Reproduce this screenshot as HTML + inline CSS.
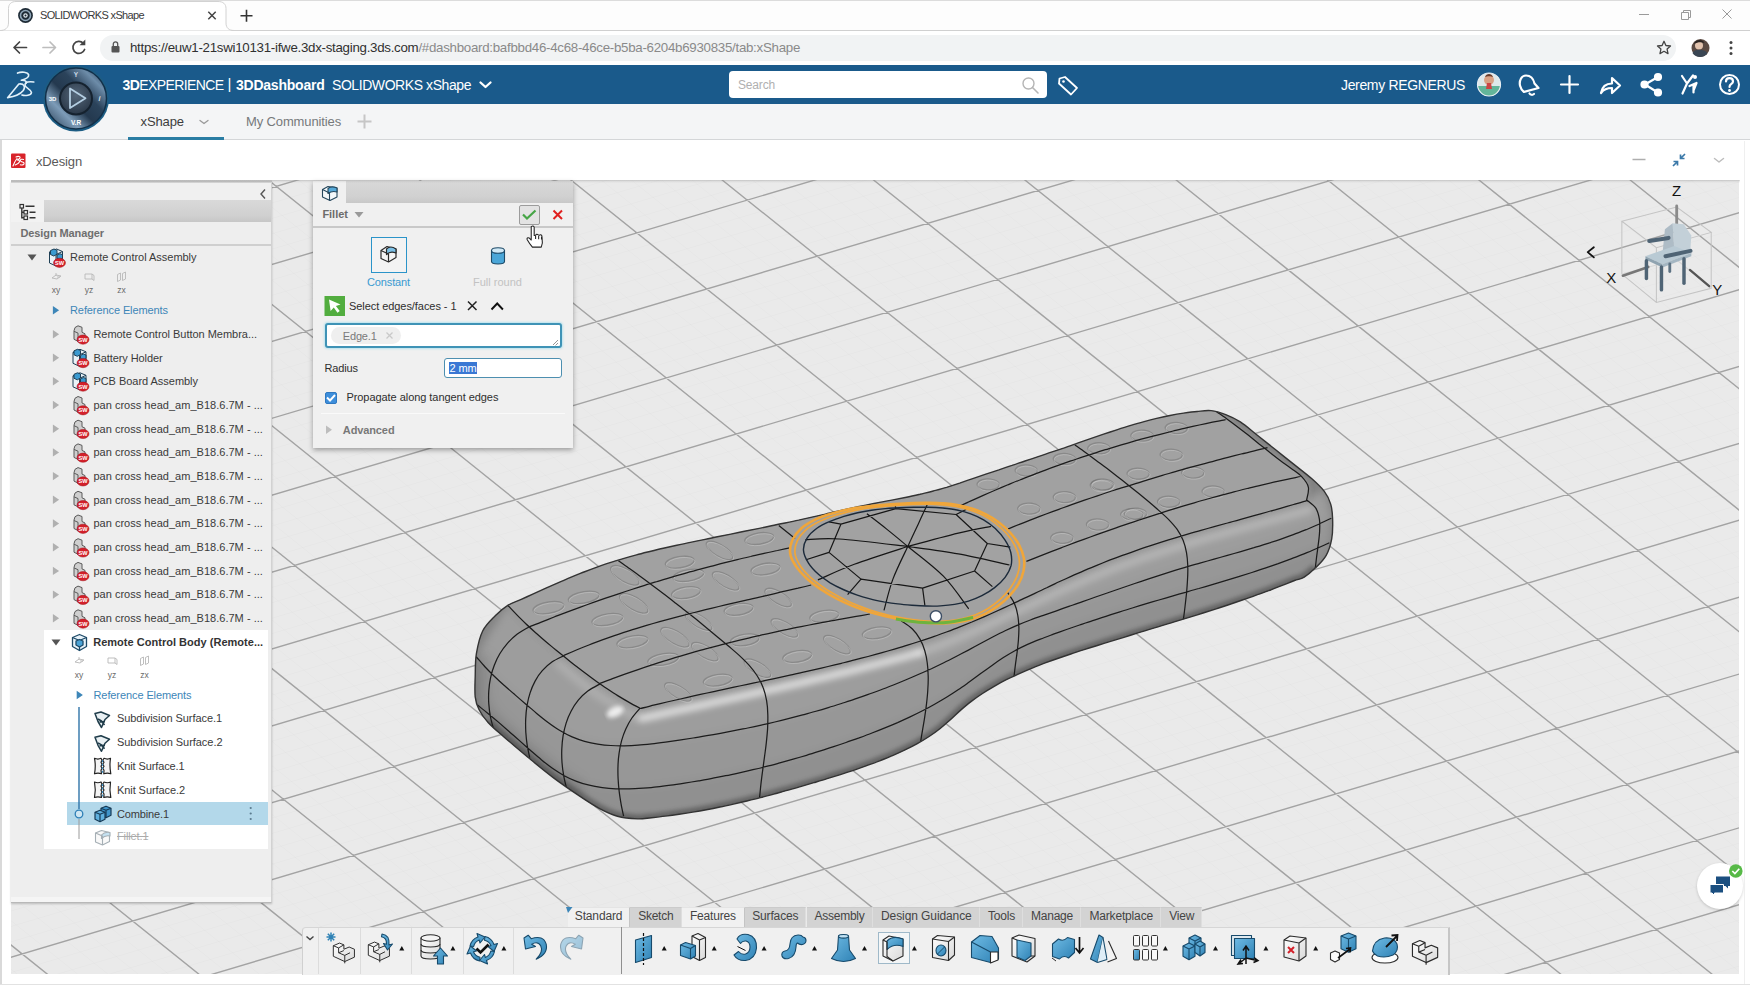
<!DOCTYPE html>
<html><head><meta charset="utf-8"><title>SOLIDWORKS xShape</title>
<style>
*{box-sizing:border-box;margin:0;padding:0}
html,body{width:1750px;height:985px;overflow:hidden;background:#fff;font-family:"Liberation Sans",sans-serif;}
.abs{position:absolute}
#root{position:absolute;left:0;top:0;width:1750px;height:985px;overflow:hidden;background:#fff}
.t{position:absolute;white-space:nowrap;line-height:1}
/* browser chrome */
#tabstrip{left:0;top:0;width:1750px;height:31px;background:#fdfdfd;border-bottom:1px solid #d0d0d0}
#tab{left:8px;top:2px;width:219px;height:29px;background:#fff;border:1px solid #cfcfcf;border-bottom:none;border-radius:8px 8px 0 0}
#addr{left:0;top:31px;width:1750px;height:34px;background:#fff}
#pill{left:100px;top:35px;width:1576px;height:26px;border-radius:13px;background:#f1f3f4}
/* header */
#hdr{left:0;top:65px;width:1750px;height:39px;background:#1a5a8b}
#search{left:729px;top:71px;width:318px;height:27px;background:#fff;border-radius:4px}
#tabsrow{left:0;top:104px;width:1750px;height:36px;background:#f4f5f6;border-bottom:1px solid #d4d6d8}
#xrow{left:0;top:140px;width:1750px;height:40px;background:#fff}
#vp{left:11px;top:180px;width:1728px;height:794px;background:#eaeaea;overflow:hidden}
</style></head><body><div id="root">
<div class="abs" id="tabstrip"></div><div class="abs" id="topline" style="left:0;top:0;width:1750px;height:1px;background:#dcdcdc"></div>
<svg class="abs" style="left:0;top:0" width="260" height="32" viewBox="0 0 260 32"><path d="M0 30.5 C5 30.5 8.5 28 8.5 23 V8.5 C8.5 4 11.5 1.5 16 1.5 H218 C223 1.5 226 4 226 8.5 V23 C226 28 229 30.5 234 30.5 H260" fill="#fff" stroke="#d2d2d2" stroke-width="1"/><rect x="0" y="31" width="260" height="1" fill="#fff"/>
<circle cx="25.5" cy="15.5" r="7.4" fill="#1d2a35"/><circle cx="25.5" cy="15.5" r="5" fill="none" stroke="#8fa6b8" stroke-width="1.6"/><circle cx="25.5" cy="15.5" r="2.2" fill="#dfe8ee"/><circle cx="25.5" cy="15.5" r="1" fill="#1d2a35"/>
<path d="M208.3 11.8l7.4 7.4M215.7 11.8l-7.4 7.4" stroke="#444" stroke-width="1.5"/><path d="M240.5 15.7h12M246.5 9.7v12" stroke="#333" stroke-width="1.6"/></svg>
<div class="t" style="letter-spacing:-0.643px;left:40px;top:10px;font-size:11px;color:#3a3a3a">SOLIDWORKS xShape</div>
<svg class="abs" style="left:1620px;top:0" width="130" height="30" viewBox="0 0 130 30"><path d="M19 14.5h10" stroke="#9a9a9a" stroke-width="1"/><path d="M61.5 12.5h7v7h-7zM63.5 12.5v-2h7v7h-2" fill="none" stroke="#9a9a9a" stroke-width="1"/><path d="M102.5 9.5l9 9M111.5 9.5l-9 9" stroke="#9a9a9a" stroke-width="1"/></svg>
<div class="abs" id="addr"></div>
<div class="abs" id="pill"></div>
<svg class="abs" style="left:0;top:32px" width="140" height="32" viewBox="0 0 140 32"><g fill="none" stroke="#444" stroke-width="1.7" stroke-linecap="round" stroke-linejoin="round"><path d="M26.5 15.5H14.5M19.5 10l-5.5 5.500 5.500 5.500"/><path d="M43 15.500h12M50 10l5.500 5.500-5.500 5.500" stroke="#bdbdbd"/><path d="M83.200 11.200a6 6 0 1 0 1.400 6.300"/></g><path d="M85.300 7.500v5.800h-5.800z" fill="#444"/><rect x="111.500" y="14" width="8" height="6.500" rx="1" fill="#555"/><path d="M113.300 14v-2a2.200 2.200 0 0 1 4.400 0v2" fill="none" stroke="#555" stroke-width="1.300"/></svg>
<div class="t" style="letter-spacing:-0.274px;left:130px;top:41px;font-size:13.3px;color:#303030">https://euw1-21swi10131-ifwe.3dx-staging.3ds.com<span style="color:#8a8a8a">/#dashboard:bafbbd46-4c68-46ce-b5ba-6204b6930835/tab:xShape</span></div>
<svg class="abs" style="left:1650px;top:32px" width="100" height="32" viewBox="0 0 100 32"><path d="M14 9.300l1.900 4.200 4.600.5-3.400 3.100.9 4.500-4-2.300-4 2.300.9-4.500-3.400-3.100 4.600-.5z" fill="none" stroke="#444" stroke-width="1.300" stroke-linejoin="round"/><circle cx="50.500" cy="16" r="9" fill="#5b4a42"/><circle cx="49" cy="13.500" r="4" fill="#e3c3ad"/><path d="M42.500 21c2-4 11-4.500 15 0a9 9 0 0 1-15 0z" fill="#3a4653"/><path d="M44 12c1-5 9-5.500 10.500-1-3-1-7-1-10.500 1z" fill="#2a2320"/><circle cx="81" cy="10.500" r="1.500" fill="#444"/><circle cx="81" cy="16" r="1.500" fill="#444"/><circle cx="81" cy="21.500" r="1.500" fill="#444"/></svg>

<div class="abs" id="hdr"></div>
<div class="abs" id="tabsrow"></div>
<div class="abs" id="xrow"></div>
<!-- 3DS logo -->
<svg class="abs" style="left:0;top:62px" width="50" height="44" viewBox="0 0 684 602"><g fill="none" stroke="#e2f1fa" stroke-width="22" stroke-linecap="round" stroke-linejoin="round"><path d="M240 152C290 130 380 135 392 175C398 215 335 238 292 250C335 246 372 262 356 292"/><path d="M104 488L258 300C330 290 352 340 318 390C280 440 190 475 104 488Z"/><path d="M462 274C400 262 342 275 342 315C342 355 428 372 430 416C430 455 345 468 300 452"/></g></svg>
<!-- compass -->
<svg class="abs" style="left:40px;top:63px" width="72" height="72" viewBox="0 0 72 72"><defs><radialGradient id="cg2" cx="0.5" cy="0.4" r="0.6"><stop offset="0" stop-color="#55677a"/><stop offset="1" stop-color="#2a3848"/></radialGradient><linearGradient id="cg3" x1="0" y1="1" x2="1" y2="0"><stop offset="0" stop-color="#1b2f45"/><stop offset="0.28" stop-color="#7d9cb8"/><stop offset="0.45" stop-color="#24394f"/><stop offset="0.62" stop-color="#2b435b"/><stop offset="0.8" stop-color="#6d8ca9"/><stop offset="1" stop-color="#1b2f45"/></linearGradient></defs>
<circle cx="36" cy="35.500" r="33" fill="#1d5d84"/><circle cx="36" cy="35.500" r="30.500" fill="url(#cg3)"/><circle cx="36" cy="35.500" r="30.500" fill="none" stroke="#123049" stroke-width="1.500"/>
<circle cx="36" cy="35.500" r="16" fill="url(#cg2)" stroke="#15222f" stroke-width="2"/>
<path d="M30 25.500v19.500l15.500-9.700z" fill="none" stroke="#b4cee2" stroke-width="1.800" stroke-linejoin="round"/>
<text x="36" y="14" font-family="Liberation Sans,sans-serif" font-size="6.500" font-weight="bold" fill="#c9d9e6" text-anchor="middle">Y</text><text x="36" y="62" font-family="Liberation Sans,sans-serif" font-size="6.500" font-weight="bold" fill="#fff" text-anchor="middle">V.R</text><text x="12.500" y="38" font-family="Liberation Sans,sans-serif" font-size="6" font-weight="bold" fill="#fff" text-anchor="middle">3D</text><text x="59.500" y="37.500" font-family="Liberation Sans,sans-serif" font-size="7" font-weight="bold" font-style="italic" fill="#dbe6ee" text-anchor="middle">i</text></svg>
<div class="t" style="letter-spacing:-0.596px;left:122.500px;top:77.500px;font-size:14px;color:#fff"><b>3D</b>EXPERIENCE</div>
<div class="t" style="left:227.500px;top:76px;font-size:15px;color:#fff">|</div>
<div class="t" style="letter-spacing:-0.230px;left:236px;top:77.500px;font-size:14px;color:#fff;font-weight:bold">3DDashboard</div>
<div class="t" style="letter-spacing:-0.428px;left:332px;top:77.500px;font-size:14px;color:#fff">SOLIDWORKS xShape</div>
<svg class="abs" style="left:478px;top:79px" width="16" height="12" viewBox="0 0 16 12"><path d="M2.500 3.500l5 4.500 5-4.500" fill="none" stroke="#fff" stroke-width="2.300" stroke-linecap="round" stroke-linejoin="round"/></svg>
<div class="abs" id="search"></div>
<div class="t" style="letter-spacing:-0.172px;left:738px;top:79px;font-size:12px;color:#b0b0b0">Search</div>
<svg class="abs" style="left:1018px;top:72px" width="70" height="26" viewBox="0 0 70 26"><circle cx="10.500" cy="11.500" r="5.500" fill="none" stroke="#b5b5b5" stroke-width="1.400"/><path d="M14.500 15.500l5.500 5.500" stroke="#b5b5b5" stroke-width="1.600" stroke-linecap="round"/><path d="M41.500 6.500l5.500-1.500 12 11-6 6.500-12-11z" fill="none" stroke="#fff" stroke-width="1.800" stroke-linejoin="round"/><circle cx="45.500" cy="9.500" r="1.300" fill="#fff"/></svg>
<div class="t" style="letter-spacing:-0.343px;left:1341px;top:77.500px;font-size:14px;color:#fff">Jeremy REGNERUS</div>
<svg class="abs" style="left:1474px;top:68px" width="276" height="34" viewBox="0 0 276 34"><defs><clipPath id="avc"><circle cx="15" cy="16.500" r="11.500"/></clipPath></defs>
<g clip-path="url(#avc)"><rect x="0" y="0" width="30" height="34" fill="#dfe8ea"/><rect x="0" y="18" width="30" height="16" fill="#63b59a"/><circle cx="15" cy="12" r="5" fill="#d9a184"/><path d="M11 9c1-4 7-4 8 0-2-1-6-1-8 0z" fill="#6a3b2a"/><path d="M13 15h4l1 6h-6z" fill="#c44"/><path d="M4 30c0-9 22-9 22 0v6H4z" fill="#63b59a"/></g><circle cx="15" cy="16.500" r="11.500" fill="none" stroke="#e8eef2" stroke-width="1.200"/>
<g fill="none" stroke="#fff" stroke-width="2.200" stroke-linecap="round" stroke-linejoin="round"><path d="M52 7.500c5 0 7.500 3.500 8.500 8l4 4.500-14.500 4c-4-3-5.500-9-3-13.500 1-1.800 2.800-3 5-3z"/><path d="M55.500 25.500c1 1.500 3 1.700 4.500.5"/><path d="M95.500 8v17M87 16.500h17"/><path d="M127 25c1-6 5-9.500 11-9.500v-5.500l8 7.500-8 7.500v-5c-5 0-8.500 1.500-11 5z"/></g>
<g fill="#fff" stroke="#fff" stroke-width="2.200"><path d="M171 16.500l12-7M171 16.500l12 7.500" fill="none"/><circle cx="170.500" cy="16.500" r="3"/><circle cx="184" cy="9" r="3"/><circle cx="184" cy="24.500" r="3"/></g>
<g fill="none" stroke="#fff" stroke-width="2.200" stroke-linecap="round" stroke-linejoin="round"><path d="M208 8l5 7.500 6-8M213 15.500l-4.500 10M215.500 18l7-3-3 7.500M219.500 17.500v7"/></g><circle cx="221" cy="9" r="2" fill="#fff"/>
<circle cx="255.500" cy="16.500" r="9.500" fill="none" stroke="#fff" stroke-width="2"/><path d="M252 13.500c0-4.500 7-4.500 7 0 0 2.500-3.500 2.500-3.500 5.500" fill="none" stroke="#fff" stroke-width="2.200" stroke-linecap="round"/><circle cx="255.500" cy="22.500" r="1.400" fill="#fff"/></svg>
<!-- tabs row -->
<div class="t" style="letter-spacing:-0.099px;left:140.500px;top:115.300px;font-size:13px;color:#3d3d3d">xShape</div>
<svg class="abs" style="left:196px;top:116px" width="16" height="12" viewBox="0 0 16 12"><path d="M4 4.500l4 3 4-3" fill="none" stroke="#9a9a9a" stroke-width="1.300" stroke-linecap="round" stroke-linejoin="round"/></svg>
<div class="abs" style="left:128px;top:137px;width:96px;height:3px;background:#2a7da3"></div>
<div class="t" style="letter-spacing:-0.128px;left:246px;top:115.300px;font-size:13px;color:#77797b">My Communities</div>
<svg class="abs" style="left:355px;top:112px" width="20" height="20" viewBox="0 0 20 20"><path d="M9.500 2.500v14M2.500 9.500h14" stroke="#c6c6c6" stroke-width="2"/></svg>
<!-- xDesign row -->
<svg class="abs" style="left:10px;top:152px" width="18" height="18" viewBox="0 0 18 18"><rect x="1" y="1.500" width="14.500" height="14.500" rx="1" fill="#d8232a"/><g fill="none" stroke="#fff" stroke-width="1.100" stroke-linecap="round"><path d="M6 5c2-1 4.500-.8 4 1-.3 1-1.700 1.600-3 2 1.500 0 2.700.4 2.500 1.600-.3 1.400-2.500 2.600-4.300 3.400"/><path d="M3 14c1-3 2.500-5.500 4-7.500"/><path d="M13.500 7.500c-1.300-.6-3-.2-3.200.8-.2 1 1 1.300 2.100 1.700 1.100.3 1.900.8 1.600 1.800-.3 1.100-2 1.500-3.700 1"/></g></svg>
<div class="t" style="letter-spacing:-0.138px;left:36px;top:154.800px;font-size:13px;color:#5a5a5a">xDesign</div>
<svg class="abs" style="left:1625px;top:148px" width="110" height="24" viewBox="0 0 110 24"><path d="M7.500 11.500h13" stroke="#aeaeae" stroke-width="1.500"/><g stroke="#3a78a8" stroke-width="1.700" fill="none"><path d="M60 6l-4.500 4.500M55.500 6.500v4h4"/><path d="M48 18l4.500-4.500M52.500 17.500v-4h-4"/></g><path d="M89.500 10.500l4.500 3.500 4.500-3.500" fill="none" stroke="#bdbdbd" stroke-width="1.500" stroke-linecap="round" stroke-linejoin="round"/></svg>

<svg class="abs" style="left:0;top:0" width="1750" height="985" viewBox="0 0 1750 985"><defs><clipPath id="vpc"><rect x="11" y="180" width="1728" height="794"/></clipPath>
<filter id="blur2" x="-10%" y="-10%" width="120%" height="120%"><feGaussianBlur stdDeviation="2.5"/></filter>
<filter id="blur25" x="-10%" y="-50%" width="120%" height="200%"><feGaussianBlur stdDeviation="2.2"/></filter>
<filter id="blur3" x="-10%" y="-50%" width="120%" height="200%"><feGaussianBlur stdDeviation="3"/></filter>
<filter id="blur4" x="-10%" y="-10%" width="120%" height="120%"><feGaussianBlur stdDeviation="4"/></filter>
<filter id="blur6" x="-10%" y="-50%" width="120%" height="200%"><feGaussianBlur stdDeviation="6"/></filter>
</defs><g clip-path="url(#vpc)"><rect x="0" y="0" width="1750" height="985" fill="#eaeaea"/><path d="M-3472.2 -144.6L2279.0 -1854.5M-4143.3 -227.0L536.6 3527.8M-3458.2 -133.4L2293.0 -1843.3M-4121.3 -233.6L558.6 3521.2M-3444.2 -122.1L2307.0 -1832.0M-4099.2 -240.1L580.7 3514.7M-3430.2 -110.9L2321.0 -1820.8M-4077.1 -246.7L602.8 3508.1M-3402.2 -88.5L2349.0 -1798.4M-4032.9 -259.8L647.0 3495.0M-3388.3 -77.3L2362.9 -1787.2M-4010.9 -266.4L669.1 3488.4M-3374.3 -66.0L2376.9 -1776.0M-3988.8 -273.0L691.1 3481.8M-3360.3 -54.8L2390.9 -1764.7M-3966.7 -279.5L713.2 3475.3M-3332.3 -32.4L2418.9 -1742.3M-3922.5 -292.6L757.4 3462.1M-3318.3 -21.2L2432.9 -1731.1M-3900.4 -299.2L779.5 3455.6M-3304.4 -9.9L2446.8 -1719.9M-3878.4 -305.8L801.6 3449.0M-3290.4 1.3L2460.8 -1708.6M-3856.3 -312.3L823.6 3442.4M-3262.4 23.7L2488.8 -1686.2M-3812.1 -325.5L867.8 3429.3M-3248.4 34.9L2502.8 -1675.0M-3790.0 -332.0L889.9 3422.8M-3234.4 46.2L2516.8 -1663.8M-3767.9 -338.6L912.0 3416.2M-3220.5 57.4L2530.7 -1652.5M-3745.9 -345.2L934.0 3409.6M-3192.5 79.8L2558.7 -1630.1M-3701.7 -358.3L978.2 3396.5M-3178.5 91.0L2572.7 -1618.9M-3679.6 -364.9L1000.3 3389.9M-3164.5 102.2L2586.7 -1607.7M-3657.5 -371.4L1022.4 3383.4M-3150.5 113.5L2600.7 -1596.4M-3635.4 -378.0L1044.5 3376.8M-3122.6 135.9L2628.6 -1574.0M-3591.3 -391.1L1088.6 3363.7M-3108.6 147.1L2642.6 -1562.8M-3569.2 -397.7L1110.7 3357.1M-3094.6 158.3L2656.6 -1551.6M-3547.1 -404.3L1132.8 3350.5M-3080.6 169.6L2670.6 -1540.3M-3525.0 -410.8L1154.9 3344.0M-3052.7 192.0L2698.5 -1517.9M-3480.9 -424.0L1199.0 3330.8M-3038.7 203.2L2712.5 -1506.7M-3458.8 -430.5L1221.1 3324.3M-3024.7 214.4L2726.5 -1495.5M-3436.7 -437.1L1243.2 3317.7M-3010.7 225.7L2740.5 -1484.3M-3414.6 -443.7L1265.3 3311.1M-2982.7 248.1L2768.5 -1461.8M-3370.4 -456.8L1309.5 3298.0M-2968.7 259.3L2782.4 -1450.6M-3348.4 -463.4L1331.5 3291.4M-2954.8 270.5L2796.4 -1439.4M-3326.3 -469.9L1353.6 3284.9M-2940.8 281.8L2810.4 -1428.2M-3304.2 -476.5L1375.7 3278.3M-2912.8 304.2L2838.4 -1405.7M-3260.0 -489.6L1419.9 3265.2M-2898.8 315.4L2852.4 -1394.5M-3237.9 -496.2L1442.0 3258.6M-2884.8 326.6L2866.3 -1383.3M-3215.9 -502.7L1464.0 3252.0M-2870.9 337.9L2880.3 -1372.1M-3193.8 -509.3L1486.1 3245.5M-2842.9 360.3L2908.3 -1349.6M-3149.6 -522.4L1530.3 3232.3M-2828.9 371.5L2922.3 -1338.4M-3127.5 -529.0L1552.4 3225.8M-2814.9 382.7L2936.3 -1327.2M-3105.4 -535.6L1574.5 3219.2M-2800.9 393.9L2950.2 -1316.0M-3083.4 -542.1L1596.5 3212.7M-2773.0 416.4L2978.2 -1293.5M-3039.2 -555.3L1640.7 3199.5M-2759.0 427.6L2992.2 -1282.3M-3017.1 -561.8L1662.8 3193.0M-2745.0 438.8L3006.2 -1271.1M-2995.0 -568.4L1684.9 3186.4M-2731.0 450.0L3020.2 -1259.9M-2973.0 -575.0L1707.0 3179.8M-2703.1 472.5L3048.1 -1237.4M-2928.8 -588.1L1751.1 3166.7M-2689.1 483.7L3062.1 -1226.2M-2906.7 -594.7L1773.2 3160.1M-2675.1 494.9L3076.1 -1215.0M-2884.6 -601.2L1795.3 3153.6M-2661.1 506.1L3090.1 -1203.8M-2862.5 -607.8L1817.4 3147.0M-2633.1 528.6L3118.0 -1181.3M-2818.4 -620.9L1861.5 3133.9M-2619.2 539.8L3132.0 -1170.1M-2796.3 -627.5L1883.6 3127.3M-2605.2 551.0L3146.0 -1158.9M-2774.2 -634.1L1905.7 3120.7M-2591.2 562.2L3160.0 -1147.7M-2752.1 -640.6L1927.8 3114.2M-2563.2 584.7L3188.0 -1125.2M-2708.0 -653.8L1972.0 3101.0M-2549.2 595.9L3201.9 -1114.0M-2685.9 -660.3L1994.0 3094.5M-2535.3 607.1L3215.9 -1102.8M-2663.8 -666.9L2016.1 3087.9M-2521.3 618.3L3229.9 -1091.6M-2641.7 -673.5L2038.2 3081.3M-2493.3 640.8L3257.9 -1069.1M-2597.5 -686.6L2082.4 3068.2M-2479.3 652.0L3271.9 -1057.9M-2575.5 -693.2L2104.4 3061.6M-2465.3 663.2L3285.8 -1046.7M-2553.4 -699.7L2126.5 3055.1M-2451.4 674.4L3299.8 -1035.5M-2531.3 -706.3L2148.6 3048.5M-2423.4 696.9L3327.8 -1013.0M-2487.1 -719.4L2192.8 3035.4M-2409.4 708.1L3341.8 -1001.8M-2465.0 -726.0L2214.9 3028.8M-2395.4 719.3L3355.8 -990.6M-2443.0 -732.5L2236.9 3022.3M-2381.4 730.5L3369.7 -979.4M-2420.9 -739.1L2259.0 3015.7M-2353.5 753.0L3397.7 -957.0M-2376.7 -752.2L2303.2 3002.6M-2339.5 764.2L3411.7 -945.7M-2354.6 -758.8L2325.3 2996.0M-2325.5 775.4L3425.7 -934.5M-2332.5 -765.4L2347.4 2989.4M-2311.5 786.6L3439.7 -923.3M-2310.5 -771.9L2369.4 2982.9M-2283.6 809.1L3467.6 -900.9M-2266.3 -785.1L2413.6 2969.7M-2269.6 820.3L3481.6 -889.6M-2244.2 -791.6L2435.7 2963.2M-2255.6 831.5L3495.6 -878.4M-2222.1 -798.2L2457.8 2956.6M-2241.6 842.7L3509.6 -867.2M-2200.0 -804.8L2479.9 2950.0M-2213.6 865.2L3537.5 -844.8M-2155.9 -817.9L2524.0 2936.9M-2199.7 876.4L3551.5 -833.5M-2133.8 -824.5L2546.1 2930.3M-2185.7 887.6L3565.5 -822.3M-2111.7 -831.0L2568.2 2923.8M-2171.7 898.8L3579.5 -811.1M-2089.6 -837.6L2590.3 2917.2M-2143.7 921.2L3607.5 -788.7M-2045.5 -850.7L2634.4 2904.1M-2129.7 932.5L3621.4 -777.4M-2023.4 -857.3L2656.5 2897.5M-2115.8 943.7L3635.4 -766.2M-2001.3 -863.9L2678.6 2890.9M-2101.8 954.9L3649.4 -755.0M-1979.2 -870.4L2700.7 2884.4M-2073.8 977.3L3677.4 -732.6M-1935.0 -883.6L2744.9 2871.2M-2059.8 988.6L3691.4 -721.3M-1913.0 -890.1L2766.9 2864.7M-2045.8 999.8L3705.3 -710.1M-1890.9 -896.7L2789.0 2858.1M-2031.9 1011.0L3719.3 -698.9M-1868.8 -903.2L2811.1 2851.5M-2003.9 1033.4L3747.3 -676.5M-1824.6 -916.4L2855.3 2838.4M-1989.9 1044.7L3761.3 -665.3M-1802.6 -922.9L2877.4 2831.8M-1975.9 1055.9L3775.3 -654.0M-1780.5 -929.5L2899.4 2825.3M-1961.9 1067.1L3789.2 -642.8M-1758.4 -936.1L2921.5 2818.7M-1934.0 1089.5L3817.2 -620.4M-1714.2 -949.2L2965.7 2805.6M-1920.0 1100.8L3831.2 -609.2M-1692.1 -955.8L2987.8 2799.0M-1906.0 1112.0L3845.2 -597.9M-1670.1 -962.3L3009.9 2792.5M-1892.0 1123.2L3859.2 -586.7M-1648.0 -968.9L3031.9 2785.9M-1864.1 1145.6L3887.1 -564.3M-1603.8 -982.0L3076.1 2772.8M-1850.1 1156.9L3901.1 -553.1M-1581.7 -988.6L3098.2 2766.2M-1836.1 1168.1L3915.1 -541.8M-1559.6 -995.2L3120.3 2759.6M-1822.1 1179.3L3929.1 -530.6M-1537.6 -1001.7L3142.3 2753.1M-1794.1 1201.7L3957.0 -508.2M-1493.4 -1014.9L3186.5 2739.9M-1780.2 1212.9L3971.0 -497.0M-1471.3 -1021.4L3208.6 2733.4M-1766.2 1224.2L3985.0 -485.7M-1449.2 -1028.0L3230.7 2726.8M-1752.2 1235.4L3999.0 -474.5M-1427.1 -1034.6L3252.8 2720.2M-1724.2 1257.8L4027.0 -452.1M-1383.0 -1047.7L3296.9 2707.1M-1710.2 1269.0L4040.9 -440.9M-1360.9 -1054.3L3319.0 2700.5M-1696.3 1280.3L4054.9 -429.6M-1338.8 -1060.8L3341.1 2694.0M-1682.3 1291.5L4068.9 -418.4M-1316.7 -1067.4L3363.2 2687.4M-1654.3 1313.9L4096.9 -396.0M-1272.6 -1080.5L3407.3 2674.3M-1640.3 1325.1L4110.9 -384.8M-1250.5 -1087.1L3429.4 2667.7M-1626.3 1336.4L4124.8 -373.6M-1228.4 -1093.7L3451.5 2661.1M-1612.4 1347.6L4138.8 -362.3M-1206.3 -1100.2L3473.6 2654.6M-1584.4 1370.0L4166.8 -339.9M-1162.1 -1113.3L3517.8 2641.4M-1570.4 1381.2L4180.8 -328.7M-1140.1 -1119.9L3539.8 2634.9M-1556.4 1392.5L4194.8 -317.5M-1118.0 -1126.5L3561.9 2628.3M-1542.4 1403.7L4208.7 -306.2M-1095.9 -1133.0L3584.0 2621.7M-1514.5 1426.1L4236.7 -283.8M-1051.7 -1146.2L3628.2 2608.6M-1500.5 1437.3L4250.7 -272.6M-1029.6 -1152.7L3650.3 2602.1M-1486.5 1448.6L4264.7 -261.4M-1007.6 -1159.3L3672.3 2595.5M-1472.5 1459.8L4278.7 -250.1M-985.5 -1165.9L3694.4 2588.9M-1444.6 1482.2L4306.6 -227.7M-941.3 -1179.0L3738.6 2575.8M-1430.6 1493.4L4320.6 -216.5M-919.2 -1185.6L3760.7 2569.2M-1416.6 1504.6L4334.6 -205.3M-897.1 -1192.1L3782.8 2562.7M-1402.6 1515.9L4348.6 -194.0M-875.1 -1198.7L3804.8 2556.1M-1374.6 1538.3L4376.5 -171.6M-830.9 -1211.8L3849.0 2543.0M-1360.7 1549.5L4390.5 -160.4M-808.8 -1218.4L3871.1 2536.4M-1346.7 1560.7L4404.5 -149.2M-786.7 -1225.0L3893.2 2529.8M-1332.7 1572.0L4418.5 -137.9M-764.7 -1231.5L3915.3 2523.3M-1304.7 1594.4L4446.5 -115.5M-720.5 -1244.7L3959.4 2510.1M-1290.7 1605.6L4460.4 -104.3M-698.4 -1251.2L3981.5 2503.6M-1276.8 1616.8L4474.4 -93.1M-676.3 -1257.8L4003.6 2497.0M-1262.8 1628.1L4488.4 -81.9M-654.2 -1264.4L4025.7 2490.4M-1234.8 1650.5L4516.4 -59.4M-610.1 -1277.5L4069.8 2477.3M-1220.8 1661.7L4530.4 -48.2M-588.0 -1284.1L4091.9 2470.7M-1206.8 1672.9L4544.3 -37.0M-565.9 -1290.6L4114.0 2464.2M-1192.9 1684.2L4558.3 -25.8M-543.8 -1297.2L4136.1 2457.6M-1164.9 1706.6L4586.3 -3.3M-499.7 -1310.3L4180.3 2444.5M-1150.9 1717.8L4600.3 7.9M-477.6 -1316.9L4202.3 2437.9M-1136.9 1729.0L4614.3 19.1M-455.5 -1323.4L4224.4 2431.3M-1122.9 1740.3L4628.3 30.3M-433.4 -1330.0L4246.5 2424.8M-1095.0 1762.7L4656.2 52.8M-389.2 -1343.1L4290.7 2411.6M-1081.0 1773.9L4670.2 64.0M-367.2 -1349.7L4312.7 2405.1M-1067.0 1785.1L4684.2 75.2M-345.1 -1356.3L4334.8 2398.5M-1053.0 1796.3L4698.2 86.4M-323.0 -1362.8L4356.9 2392.0M-1025.1 1818.8L4726.1 108.9M-278.8 -1376.0L4401.1 2378.8M-1011.1 1830.0L4740.1 120.1M-256.7 -1382.5L4423.2 2372.3M-997.1 1841.2L4754.1 131.3M-234.7 -1389.1L4445.2 2365.7M-983.1 1852.4L4768.1 142.5M-212.6 -1395.7L4467.3 2359.1M-955.1 1874.9L4796.1 165.0M-168.4 -1408.8L4511.5 2346.0M-941.2 1886.1L4810.0 176.2M-146.3 -1415.4L4533.6 2339.4M-927.2 1897.3L4824.0 187.4M-124.2 -1421.9L4555.7 2332.9M-913.2 1908.5L4838.0 198.6M-102.2 -1428.5L4577.7 2326.3M-885.2 1931.0L4866.0 221.1M-58.0 -1441.6L4621.9 2313.2M-871.2 1942.2L4880.0 232.3M-35.9 -1448.2L4644.0 2306.6M-857.3 1953.4L4893.9 243.5M-13.8 -1454.8L4666.1 2300.0M-843.3 1964.6L4907.9 254.7M8.3 -1461.3L4688.2 2293.5M-815.3 1987.1L4935.9 277.2M52.4 -1474.5L4732.3 2280.3M-801.3 1998.3L4949.9 288.4M74.5 -1481.0L4754.4 2273.8M-787.3 2009.5L4963.9 299.6M96.6 -1487.6L4776.5 2267.2M-773.4 2020.7L4977.8 310.8M118.7 -1494.2L4798.6 2260.6M-745.4 2043.2L5005.8 333.3M162.8 -1507.3L4842.7 2247.5M-731.4 2054.4L5019.8 344.5M184.9 -1513.9L4864.8 2240.9M-717.4 2065.6L5033.8 355.7M207.0 -1520.4L4886.9 2234.4M-703.4 2076.8L5047.8 366.9M229.1 -1527.0L4909.0 2227.8M-675.5 2099.3L5075.7 389.4M273.3 -1540.1L4953.2 2214.7M-661.5 2110.5L5089.7 400.6M295.3 -1546.7L4975.2 2208.1M-647.5 2121.7L5103.7 411.8M317.4 -1553.2L4997.3 2201.6M-633.5 2132.9L5117.7 423.0M339.5 -1559.8L5019.4 2195.0M-605.6 2155.4L5145.6 445.4M383.7 -1572.9L5063.6 2181.9M-591.6 2166.6L5159.6 456.7M405.7 -1579.5L5085.7 2175.3M-577.6 2177.8L5173.6 467.9M427.8 -1586.1L5107.7 2168.7M-563.6 2189.0L5187.6 479.1M449.9 -1592.6L5129.8 2162.2M-535.6 2211.5L5215.6 501.5M494.1 -1605.8L5174.0 2149.0M-521.7 2222.7L5229.5 512.8M516.2 -1612.3L5196.1 2142.5M-507.7 2233.9L5243.5 524.0M538.2 -1618.9L5218.2 2135.9M-493.7 2245.1L5257.5 535.2M560.3 -1625.5L5240.2 2129.3M-465.7 2267.6L5285.5 557.6M604.5 -1638.6L5284.4 2116.2M-451.7 2278.8L5299.5 568.9M626.6 -1645.2L5306.5 2109.6M-437.8 2290.0L5313.4 580.1M648.7 -1651.7L5328.6 2103.1M-423.8 2301.2L5327.4 591.3M670.7 -1658.3L5350.6 2096.5M-395.8 2323.6L5355.4 613.7M714.9 -1671.4L5394.8 2083.4M-381.8 2334.9L5369.4 625.0M737.0 -1678.0L5416.9 2076.8M-367.8 2346.1L5383.4 636.2M759.1 -1684.6L5439.0 2070.2M-353.9 2357.3L5397.3 647.4M781.2 -1691.1L5461.1 2063.7M-325.9 2379.7L5425.3 669.8M825.3 -1704.3L5505.2 2050.5M-311.9 2391.0L5439.3 681.1M847.4 -1710.8L5527.3 2044.0M-297.9 2402.2L5453.3 692.3M869.5 -1717.4L5549.4 2037.4M-283.9 2413.4L5467.3 703.5M891.6 -1723.9L5571.5 2030.8M-256.0 2435.8L5495.2 725.9M935.7 -1737.1L5615.6 2017.7M-242.0 2447.1L5509.2 737.1M957.8 -1743.6L5637.7 2011.1M-228.0 2458.3L5523.2 748.4M979.9 -1750.2L5659.8 2004.6M-214.0 2469.5L5537.2 759.6M1002.0 -1756.8L5681.9 1998.0M-186.1 2491.9L5565.1 782.0M1046.2 -1769.9L5726.1 1984.9M-172.1 2503.2L5579.1 793.2M1068.2 -1776.5L5748.1 1978.3M-158.1 2514.4L5593.1 804.5M1090.3 -1783.0L5770.2 1971.8M-144.1 2525.6L5607.1 815.7M1112.4 -1789.6L5792.3 1965.2M-116.1 2548.0L5635.1 838.1M1156.6 -1802.7L5836.5 1952.1M-102.2 2559.3L5649.0 849.3M1178.7 -1809.3L5858.6 1945.5M-88.2 2570.5L5663.0 860.6M1200.7 -1815.9L5880.6 1938.9M-74.2 2581.7L5677.0 871.8M1222.8 -1822.4L5902.7 1932.4M-46.2 2604.1L5705.0 894.2M1267.0 -1835.6L5946.9 1919.2M-32.2 2615.3L5719.0 905.4M1289.1 -1842.1L5969.0 1912.7M-18.3 2626.6L5732.9 916.7M1311.2 -1848.7L5991.1 1906.1M-4.3 2637.8L5746.9 927.9M1333.2 -1855.3L6013.1 1899.5M23.7 2660.2L5774.9 950.3M1377.4 -1868.4L6057.3 1886.4M37.7 2671.4L5788.9 961.5M1399.5 -1875.0L6079.4 1879.8M51.7 2682.7L5802.9 972.8M1421.6 -1881.5L6101.5 1873.3M65.6 2693.9L5816.8 984.0M1443.6 -1888.1L6123.6 1866.7M93.6 2716.3L5844.8 1006.4M1487.8 -1901.2L6167.7 1853.6M107.6 2727.5L5858.8 1017.6M1509.9 -1907.8L6189.8 1847.0M121.6 2738.8L5872.8 1028.8M1532.0 -1914.4L6211.9 1840.4M135.6 2750.0L5886.8 1040.1M1554.1 -1920.9L6234.0 1833.9M163.5 2772.4L5914.7 1062.5M1598.2 -1934.0L6278.1 1820.7M177.5 2783.6L5928.7 1073.7M1620.3 -1940.6L6300.2 1814.2M191.5 2794.9L5942.7 1084.9M1642.4 -1947.2L6322.3 1807.6M205.5 2806.1L5956.7 1096.2M1664.5 -1953.7L6344.4 1801.0M233.4 2828.5L5984.6 1118.6M1708.6 -1966.9L6388.6 1787.9M247.4 2839.7L5998.6 1129.8M1730.7 -1973.4L6410.6 1781.4M261.4 2851.0L6012.6 1141.0M1752.8 -1980.0L6432.7 1774.8M275.4 2862.2L6026.6 1152.3M1774.9 -1986.6L6454.8 1768.2M303.4 2884.6L6054.6 1174.7M1819.1 -1999.7L6499.0 1755.1M317.3 2895.8L6068.5 1185.9M1841.1 -2006.3L6521.0 1748.5M331.3 2907.0L6082.5 1197.1M1863.2 -2012.8L6543.1 1742.0M345.3 2918.3L6096.5 1208.4M1885.3 -2019.4L6565.2 1735.4M373.3 2940.7L6124.5 1230.8M1929.5 -2032.5L6609.4 1722.3M387.3 2951.9L6138.5 1242.0M1951.6 -2039.1L6631.5 1715.7M401.2 2963.1L6152.4 1253.2M1973.6 -2045.7L6653.5 1709.1M415.2 2974.4L6166.4 1264.5M1995.7 -2052.2L6675.6 1702.6M443.2 2996.8L6194.4 1286.9M2039.9 -2065.4L6719.8 1689.4M457.2 3008.0L6208.4 1298.1M2062.0 -2071.9L6741.9 1682.9M471.2 3019.2L6222.4 1309.3M2084.1 -2078.5L6764.0 1676.3M485.2 3030.5L6236.3 1320.5M2106.1 -2085.1L6786.0 1669.7M513.1 3052.9L6264.3 1343.0M2150.3 -2098.2L6830.2 1656.6M527.1 3064.1L6278.3 1354.2M2172.4 -2104.8L6852.3 1650.0M541.1 3075.3L6292.3 1365.4M2194.5 -2111.3L6874.4 1643.5M555.1 3086.6L6306.3 1376.6M2216.6 -2117.9L6896.5 1636.9M583.0 3109.0L6334.2 1399.1M2260.7 -2131.0L6940.6 1623.8M597.0 3120.2L6348.2 1410.3M2282.8 -2137.6L6962.7 1617.2M611.0 3131.4L6362.2 1421.5M2304.9 -2144.1L6984.8 1610.6M625.0 3142.7L6376.2 1432.7M2327.0 -2150.7L7006.9 1604.1M653.0 3165.1L6404.1 1455.2M2371.1 -2163.8L7051.0 1590.9M666.9 3176.3L6418.1 1466.4M2393.2 -2170.4L7073.1 1584.4M680.9 3187.5L6432.1 1477.6M2415.3 -2177.0L7095.2 1577.8M694.9 3198.7L6446.1 1488.8M2437.4 -2183.5L7117.3 1571.3" stroke="#000" stroke-opacity="0.014" stroke-width="1" fill="none"/>
<path d="M-3486.1 -155.8L2265.1 -1865.7M-4165.4 -220.4L514.5 3534.4M-3416.2 -99.7L2335.0 -1809.6M-4055.0 -253.3L624.9 3501.5M-3346.3 -43.6L2404.9 -1753.5M-3944.6 -286.1L735.3 3468.7M-3276.4 12.5L2474.8 -1697.4M-3834.2 -318.9L845.7 3435.9M-3206.5 68.6L2544.7 -1641.3M-3723.8 -351.7L956.1 3403.1M-3136.6 124.7L2614.6 -1585.2M-3613.4 -384.6L1066.5 3370.2M-3066.6 180.8L2684.6 -1529.1M-3502.9 -417.4L1177.0 3337.4M-2996.7 236.9L2754.5 -1473.0M-3392.5 -450.2L1287.4 3304.6M-2926.8 293.0L2824.4 -1416.9M-3282.1 -483.1L1397.8 3271.7M-2856.9 349.1L2894.3 -1360.8M-3171.7 -515.9L1508.2 3238.9M-2787.0 405.2L2964.2 -1304.7M-3061.3 -548.7L1618.6 3206.1M-2717.0 461.3L3034.1 -1248.7M-2950.9 -581.5L1729.0 3173.3M-2647.1 517.4L3104.1 -1192.6M-2840.5 -614.4L1839.5 3140.4M-2577.2 573.5L3174.0 -1136.5M-2730.0 -647.2L1949.9 3107.6M-2507.3 629.6L3243.9 -1080.4M-2619.6 -680.0L2060.3 3074.8M-2437.4 685.6L3313.8 -1024.3M-2509.2 -712.8L2170.7 3041.9M-2367.5 741.7L3383.7 -968.2M-2398.8 -745.7L2281.1 3009.1M-2297.5 797.8L3453.6 -912.1M-2288.4 -778.5L2391.5 2976.3M-2227.6 853.9L3523.6 -856.0M-2178.0 -811.3L2501.9 2943.5M-2157.7 910.0L3593.5 -799.9M-2067.5 -844.2L2612.4 2910.6M-2087.8 966.1L3663.4 -743.8M-1957.1 -877.0L2722.8 2877.8M-2017.9 1022.2L3733.3 -687.7M-1846.7 -909.8L2833.2 2845.0M-1948.0 1078.3L3803.2 -631.6M-1736.3 -942.6L2943.6 2812.2M-1878.0 1134.4L3873.1 -575.5M-1625.9 -975.5L3054.0 2779.3M-1808.1 1190.5L3943.1 -519.4M-1515.5 -1008.3L3164.4 2746.5M-1738.2 1246.6L4013.0 -463.3M-1405.1 -1041.1L3274.8 2713.7M-1668.3 1302.7L4082.9 -407.2M-1294.6 -1074.0L3385.3 2680.8M-1598.4 1358.8L4152.8 -351.1M-1184.2 -1106.8L3495.7 2648.0M-1528.5 1414.9L4222.7 -295.0M-1073.8 -1139.6L3606.1 2615.2M-1458.5 1471.0L4292.6 -238.9M-963.4 -1172.4L3716.5 2582.4M-1388.6 1527.1L4362.6 -182.8M-853.0 -1205.3L3826.9 2549.5M-1318.7 1583.2L4432.5 -126.7M-742.6 -1238.1L3937.3 2516.7M-1248.8 1639.3L4502.4 -70.6M-632.2 -1270.9L4047.8 2483.9M-1178.9 1695.4L4572.3 -14.5M-521.7 -1303.8L4158.2 2451.0M-1109.0 1751.5L4642.2 41.6M-411.3 -1336.6L4268.6 2418.2M-1039.0 1807.6L4712.2 97.7M-300.9 -1369.4L4379.0 2385.4M-969.1 1863.7L4782.1 153.7M-190.5 -1402.2L4489.4 2352.6M-899.2 1919.8L4852.0 209.8M-80.1 -1435.1L4599.8 2319.7M-829.3 1975.9L4921.9 265.9M30.3 -1467.9L4710.2 2286.9M-759.4 2032.0L4991.8 322.0M140.8 -1500.7L4820.7 2254.1M-689.5 2088.0L5061.7 378.1M251.2 -1533.5L4931.1 2221.2M-619.5 2144.1L5131.7 434.2M361.6 -1566.4L5041.5 2188.4M-549.6 2200.2L5201.6 490.3M472.0 -1599.2L5151.9 2155.6M-479.7 2256.3L5271.5 546.4M582.4 -1632.0L5262.3 2122.8M-409.8 2312.4L5341.4 602.5M692.8 -1664.9L5372.7 2089.9M-339.9 2368.5L5411.3 658.6M803.2 -1697.7L5483.1 2057.1M-270.0 2424.6L5481.2 714.7M913.7 -1730.5L5593.6 2024.3M-200.0 2480.7L5551.2 770.8M1024.1 -1763.3L5704.0 1991.5M-130.1 2536.8L5621.1 826.9M1134.5 -1796.2L5814.4 1958.6M-60.2 2592.9L5691.0 883.0M1244.9 -1829.0L5924.8 1925.8M9.7 2649.0L5760.9 939.1M1355.3 -1861.8L6035.2 1893.0M79.6 2705.1L5830.8 995.2M1465.7 -1894.7L6145.6 1860.1M149.5 2761.2L5900.7 1051.3M1576.1 -1927.5L6256.1 1827.3M219.5 2817.3L5970.7 1107.4M1686.6 -1960.3L6366.5 1794.5M289.4 2873.4L6040.6 1163.5M1797.0 -1993.1L6476.9 1761.7M359.3 2929.5L6110.5 1219.6M1907.4 -2026.0L6587.3 1728.8M429.2 2985.6L6180.4 1275.7M2017.8 -2058.8L6697.7 1696.0M499.1 3041.7L6250.3 1331.8M2128.2 -2091.6L6808.1 1663.2M569.1 3097.8L6320.2 1387.9M2238.6 -2124.5L6918.5 1630.3M639.0 3153.9L6390.2 1444.0M2349.1 -2157.3L7029.0 1597.5M708.9 3210.0L6460.1 1500.1M2459.5 -2190.1L7139.4 1564.7" stroke="#a3a3a3" stroke-width="1.4" fill="none"/><g id="model">
<clipPath id="silc"><path d="M508.1 605.2C512.3 602.5 516.5 601.5 520.7 599.6C524.9 597.7 529.1 595.8 533.3 593.9C537.5 592.0 541.7 590.1 545.9 588.2C550.1 586.3 554.3 584.5 558.5 582.6C562.8 580.8 567.0 578.9 571.2 577.2C575.5 575.4 579.8 573.7 584.0 572.0C588.3 570.3 592.6 568.7 597.0 567.1C601.3 565.6 605.6 564.1 610.0 562.7C614.4 561.2 618.8 559.9 623.2 558.6C627.6 557.3 632.0 556.1 636.5 554.9C640.9 553.7 645.4 552.6 649.8 551.5C654.3 550.4 658.8 549.3 663.3 548.3C667.8 547.2 672.3 546.2 676.8 545.3C681.3 544.3 685.8 543.3 690.3 542.4C694.8 541.4 699.3 540.5 703.9 539.6C708.4 538.7 712.9 537.8 717.4 536.8C721.9 535.9 726.4 535.0 730.9 534.1C735.5 533.2 740.0 532.3 744.5 531.3C749.0 530.4 753.5 529.5 758.0 528.6C762.5 527.7 767.0 526.7 771.5 525.8C776.1 524.8 780.6 523.9 785.1 523.0C789.6 522.0 794.1 521.0 798.6 520.1C803.0 519.1 807.5 518.1 812.0 517.1C816.5 516.1 821.0 515.1 825.5 514.1C830.0 513.0 834.5 512.0 838.9 511.0C843.4 509.9 847.9 508.9 852.4 507.9C856.9 507.0 861.4 506.0 865.9 505.1C870.4 504.2 875.0 503.3 879.5 502.4C884.0 501.6 888.5 500.8 893.0 499.9C897.5 499.0 902.0 498.1 906.5 497.2C911.0 496.3 915.5 495.3 920.0 494.3C924.4 493.2 928.9 492.2 933.3 491.0C937.7 489.8 942.2 488.6 946.6 487.3C950.9 485.9 955.3 484.5 959.7 483.1C964.0 481.6 968.4 480.1 972.7 478.7C977.1 477.2 981.4 475.7 985.8 474.2C990.1 472.7 994.5 471.2 998.9 469.8C1003.2 468.3 1007.6 466.8 1012.0 465.4C1016.3 463.9 1020.7 462.5 1025.0 461.0C1029.4 459.5 1033.8 458.1 1038.2 456.6C1042.5 455.1 1046.9 453.7 1051.3 452.2C1055.6 450.7 1060.0 449.2 1064.4 447.8C1068.7 446.3 1073.1 444.8 1077.5 443.2C1081.8 441.7 1086.2 440.2 1090.5 438.7C1094.9 437.2 1099.3 435.7 1103.6 434.2C1108.0 432.7 1112.4 431.3 1116.8 429.8C1121.2 428.4 1125.6 427.0 1130.0 425.7C1134.4 424.4 1138.8 423.1 1143.2 421.9C1147.6 420.7 1152.1 419.5 1156.6 418.4C1161.0 417.4 1165.5 416.4 1170.0 415.5C1174.5 414.6 1179.0 413.8 1183.6 413.1C1188.1 412.5 1192.7 411.9 1197.2 411.5C1201.8 411.0 1206.4 410.0 1211.1 410.6C1215.8 411.1 1220.8 412.7 1225.7 414.6C1230.6 416.5 1235.1 418.5 1240.3 421.9C1245.5 425.2 1250.9 430.1 1256.7 434.7C1262.5 439.3 1268.9 444.4 1275.0 449.3C1281.1 454.2 1287.2 459.0 1293.3 463.9C1299.4 468.8 1306.4 474.0 1311.6 478.6C1316.8 483.2 1321.1 487.1 1324.3 491.4C1327.5 495.6 1329.3 499.5 1330.7 504.1C1332.1 508.7 1332.4 513.0 1332.6 518.8C1332.8 524.6 1332.8 532.8 1331.7 538.9C1330.6 545.0 1329.0 550.4 1326.2 555.3C1323.5 560.2 1318.9 564.5 1315.2 568.1C1311.5 571.8 1307.6 575.1 1304.2 577.2C1300.8 579.3 1298.4 579.1 1294.6 580.5C1290.9 581.9 1286.0 584.0 1281.6 585.7C1277.3 587.4 1272.9 589.0 1268.6 590.7C1264.2 592.3 1259.9 593.9 1255.5 595.4C1251.2 597.0 1246.8 598.5 1242.4 600.0C1238.1 601.5 1233.7 603.0 1229.3 604.5C1225.0 605.9 1220.6 607.4 1216.2 608.8C1211.8 610.2 1207.4 611.6 1203.1 613.0C1198.7 614.4 1194.3 615.8 1189.9 617.2C1185.5 618.5 1181.1 619.9 1176.7 621.2C1172.3 622.6 1167.9 623.9 1163.5 625.2C1159.1 626.6 1154.7 627.9 1150.3 629.2C1145.9 630.6 1141.5 631.9 1137.1 633.2C1132.7 634.6 1128.3 635.9 1123.9 637.3C1119.5 638.6 1115.0 640.0 1110.6 641.3C1106.2 642.7 1101.8 644.1 1097.4 645.5C1093.0 646.8 1088.5 648.2 1084.1 649.7C1079.7 651.1 1075.3 652.5 1070.8 654.0C1066.4 655.5 1062.0 657.0 1057.6 658.5C1053.2 660.0 1048.8 661.6 1044.5 663.2C1040.1 664.9 1035.8 666.5 1031.5 668.3C1027.2 670.0 1023.0 671.9 1018.8 673.8C1014.6 675.7 1010.4 677.6 1006.3 679.7C1002.2 681.8 998.2 684.0 994.2 686.3C990.2 688.6 986.3 690.9 982.5 693.5C978.7 696.0 975.0 698.6 971.3 701.4C967.7 704.1 964.2 707.1 960.7 710.1C957.3 713.1 954.0 716.4 950.6 719.5C947.2 722.5 943.8 725.7 940.2 728.5C936.6 731.4 932.9 734.0 929.1 736.5C925.3 739.0 921.3 741.4 917.3 743.6C913.3 745.8 909.2 747.9 905.0 749.9C900.9 751.9 896.7 753.8 892.5 755.6C888.2 757.4 884.0 759.2 879.7 760.8C875.4 762.5 871.0 764.1 866.7 765.7C862.3 767.3 858.0 768.8 853.6 770.3C849.2 771.7 844.8 773.2 840.4 774.6C835.9 776.0 831.5 777.3 827.1 778.7C822.7 780.1 818.2 781.4 813.8 782.7C809.3 784.0 804.9 785.3 800.5 786.6C796.0 787.9 791.6 789.2 787.1 790.4C782.7 791.7 778.2 792.9 773.8 794.1C769.3 795.3 764.8 796.5 760.4 797.6C755.9 798.8 751.4 799.9 746.9 801.0C742.4 802.0 738.0 803.1 733.5 804.1C729.0 805.1 724.5 806.1 719.9 807.0C715.4 808.0 710.9 808.9 706.4 809.7C701.9 810.6 697.3 811.4 692.8 812.1C688.2 812.9 683.7 813.6 679.1 814.3C674.5 815.0 669.9 815.6 665.4 816.1C660.8 816.7 656.2 817.2 651.5 817.7C646.9 818.1 643.4 819.1 637.7 818.9C632.0 818.6 623.7 817.9 617.4 816.2C611.1 814.5 606.0 812.0 599.6 808.6C593.2 805.2 586.9 801.0 579.3 795.9C571.7 790.8 562.4 784.5 553.9 778.1C545.4 771.8 537.0 764.8 528.5 757.8C520.0 750.8 509.9 742.1 503.1 736.2C496.3 730.3 491.9 726.7 487.9 722.2C483.9 717.8 481.1 713.7 479.0 709.5C476.9 705.3 475.8 702.3 475.2 696.8C474.6 691.3 475.0 683.7 475.2 676.5C475.4 669.3 475.1 661.2 476.4 653.6C477.7 646.0 479.6 637.1 482.8 630.8C486.0 624.5 491.3 619.9 495.5 615.6C499.7 611.3 503.9 607.9 508.1 605.2Z"/></clipPath>
<path d="M508.1 605.2C512.3 602.5 516.5 601.5 520.7 599.6C524.9 597.7 529.1 595.8 533.3 593.9C537.5 592.0 541.7 590.1 545.9 588.2C550.1 586.3 554.3 584.5 558.5 582.6C562.8 580.8 567.0 578.9 571.2 577.2C575.5 575.4 579.8 573.7 584.0 572.0C588.3 570.3 592.6 568.7 597.0 567.1C601.3 565.6 605.6 564.1 610.0 562.7C614.4 561.2 618.8 559.9 623.2 558.6C627.6 557.3 632.0 556.1 636.5 554.9C640.9 553.7 645.4 552.6 649.8 551.5C654.3 550.4 658.8 549.3 663.3 548.3C667.8 547.2 672.3 546.2 676.8 545.3C681.3 544.3 685.8 543.3 690.3 542.4C694.8 541.4 699.3 540.5 703.9 539.6C708.4 538.7 712.9 537.8 717.4 536.8C721.9 535.9 726.4 535.0 730.9 534.1C735.5 533.2 740.0 532.3 744.5 531.3C749.0 530.4 753.5 529.5 758.0 528.6C762.5 527.7 767.0 526.7 771.5 525.8C776.1 524.8 780.6 523.9 785.1 523.0C789.6 522.0 794.1 521.0 798.6 520.1C803.0 519.1 807.5 518.1 812.0 517.1C816.5 516.1 821.0 515.1 825.5 514.1C830.0 513.0 834.5 512.0 838.9 511.0C843.4 509.9 847.9 508.9 852.4 507.9C856.9 507.0 861.4 506.0 865.9 505.1C870.4 504.2 875.0 503.3 879.5 502.4C884.0 501.6 888.5 500.8 893.0 499.9C897.5 499.0 902.0 498.1 906.5 497.2C911.0 496.3 915.5 495.3 920.0 494.3C924.4 493.2 928.9 492.2 933.3 491.0C937.7 489.8 942.2 488.6 946.6 487.3C950.9 485.9 955.3 484.5 959.7 483.1C964.0 481.6 968.4 480.1 972.7 478.7C977.1 477.2 981.4 475.7 985.8 474.2C990.1 472.7 994.5 471.2 998.9 469.8C1003.2 468.3 1007.6 466.8 1012.0 465.4C1016.3 463.9 1020.7 462.5 1025.0 461.0C1029.4 459.5 1033.8 458.1 1038.2 456.6C1042.5 455.1 1046.9 453.7 1051.3 452.2C1055.6 450.7 1060.0 449.2 1064.4 447.8C1068.7 446.3 1073.1 444.8 1077.5 443.2C1081.8 441.7 1086.2 440.2 1090.5 438.7C1094.9 437.2 1099.3 435.7 1103.6 434.2C1108.0 432.7 1112.4 431.3 1116.8 429.8C1121.2 428.4 1125.6 427.0 1130.0 425.7C1134.4 424.4 1138.8 423.1 1143.2 421.9C1147.6 420.7 1152.1 419.5 1156.6 418.4C1161.0 417.4 1165.5 416.4 1170.0 415.5C1174.5 414.6 1179.0 413.8 1183.6 413.1C1188.1 412.5 1192.7 411.9 1197.2 411.5C1201.8 411.0 1206.4 410.0 1211.1 410.6C1215.8 411.1 1220.8 412.7 1225.7 414.6C1230.6 416.5 1235.1 418.5 1240.3 421.9C1245.5 425.2 1250.9 430.1 1256.7 434.7C1262.5 439.3 1268.9 444.4 1275.0 449.3C1281.1 454.2 1287.2 459.0 1293.3 463.9C1299.4 468.8 1306.4 474.0 1311.6 478.6C1316.8 483.2 1321.1 487.1 1324.3 491.4C1327.5 495.6 1329.3 499.5 1330.7 504.1C1332.1 508.7 1332.4 513.0 1332.6 518.8C1332.8 524.6 1332.8 532.8 1331.7 538.9C1330.6 545.0 1329.0 550.4 1326.2 555.3C1323.5 560.2 1318.9 564.5 1315.2 568.1C1311.5 571.8 1307.6 575.1 1304.2 577.2C1300.8 579.3 1298.4 579.1 1294.6 580.5C1290.9 581.9 1286.0 584.0 1281.6 585.7C1277.3 587.4 1272.9 589.0 1268.6 590.7C1264.2 592.3 1259.9 593.9 1255.5 595.4C1251.2 597.0 1246.8 598.5 1242.4 600.0C1238.1 601.5 1233.7 603.0 1229.3 604.5C1225.0 605.9 1220.6 607.4 1216.2 608.8C1211.8 610.2 1207.4 611.6 1203.1 613.0C1198.7 614.4 1194.3 615.8 1189.9 617.2C1185.5 618.5 1181.1 619.9 1176.7 621.2C1172.3 622.6 1167.9 623.9 1163.5 625.2C1159.1 626.6 1154.7 627.9 1150.3 629.2C1145.9 630.6 1141.5 631.9 1137.1 633.2C1132.7 634.6 1128.3 635.9 1123.9 637.3C1119.5 638.6 1115.0 640.0 1110.6 641.3C1106.2 642.7 1101.8 644.1 1097.4 645.5C1093.0 646.8 1088.5 648.2 1084.1 649.7C1079.7 651.1 1075.3 652.5 1070.8 654.0C1066.4 655.5 1062.0 657.0 1057.6 658.5C1053.2 660.0 1048.8 661.6 1044.5 663.2C1040.1 664.9 1035.8 666.5 1031.5 668.3C1027.2 670.0 1023.0 671.9 1018.8 673.8C1014.6 675.7 1010.4 677.6 1006.3 679.7C1002.2 681.8 998.2 684.0 994.2 686.3C990.2 688.6 986.3 690.9 982.5 693.5C978.7 696.0 975.0 698.6 971.3 701.4C967.7 704.1 964.2 707.1 960.7 710.1C957.3 713.1 954.0 716.4 950.6 719.5C947.2 722.5 943.8 725.7 940.2 728.5C936.6 731.4 932.9 734.0 929.1 736.5C925.3 739.0 921.3 741.4 917.3 743.6C913.3 745.8 909.2 747.9 905.0 749.9C900.9 751.9 896.7 753.8 892.5 755.6C888.2 757.4 884.0 759.2 879.7 760.8C875.4 762.5 871.0 764.1 866.7 765.7C862.3 767.3 858.0 768.8 853.6 770.3C849.2 771.7 844.8 773.2 840.4 774.6C835.9 776.0 831.5 777.3 827.1 778.7C822.7 780.1 818.2 781.4 813.8 782.7C809.3 784.0 804.9 785.3 800.5 786.6C796.0 787.9 791.6 789.2 787.1 790.4C782.7 791.7 778.2 792.9 773.8 794.1C769.3 795.3 764.8 796.5 760.4 797.6C755.9 798.8 751.4 799.9 746.9 801.0C742.4 802.0 738.0 803.1 733.5 804.1C729.0 805.1 724.5 806.1 719.9 807.0C715.4 808.0 710.9 808.9 706.4 809.7C701.9 810.6 697.3 811.4 692.8 812.1C688.2 812.9 683.7 813.6 679.1 814.3C674.5 815.0 669.9 815.6 665.4 816.1C660.8 816.7 656.2 817.2 651.5 817.7C646.9 818.1 643.4 819.1 637.7 818.9C632.0 818.6 623.7 817.9 617.4 816.2C611.1 814.5 606.0 812.0 599.6 808.6C593.2 805.2 586.9 801.0 579.3 795.9C571.7 790.8 562.4 784.5 553.9 778.1C545.4 771.8 537.0 764.8 528.5 757.8C520.0 750.8 509.9 742.1 503.1 736.2C496.3 730.3 491.9 726.7 487.9 722.2C483.9 717.8 481.1 713.7 479.0 709.5C476.9 705.3 475.8 702.3 475.2 696.8C474.6 691.3 475.0 683.7 475.2 676.5C475.4 669.3 475.1 661.2 476.4 653.6C477.7 646.0 479.6 637.1 482.8 630.8C486.0 624.5 491.3 619.9 495.5 615.6C499.7 611.3 503.9 607.9 508.1 605.2Z" fill="#828282"/>
<g clip-path="url(#silc)">
<g filter="url(#blur4)">
<path d="M508.1 605.6L516.9 614.9L526.1 624.0L535.6 632.7L545.4 641.2L555.3 649.5L565.3 657.6L575.5 665.7L585.8 673.5L596.2 681.2L606.8 688.5L617.7 695.6L628.7 702.1L640.1 708.3L653.6 705.2L666.9 702.0L680.3 699.0L693.7 695.9L707.1 693.0L720.5 690.1L734.0 687.2L747.4 684.3L760.9 681.5L774.3 678.6L787.8 675.6L801.2 672.7L814.6 669.6L828.0 666.5L841.4 663.3L854.7 659.9L868.0 656.5L881.2 652.9L894.4 649.1L907.5 645.1L920.6 641.0L933.6 636.6L946.4 632.0L959.2 627.1L971.9 622.0L984.5 616.6L997.0 611.0L1009.5 605.3L1021.9 599.4L1034.3 593.6L1046.7 587.7L1059.1 581.8L1071.6 576.1L1084.1 570.6L1096.8 565.3L1109.5 560.2L1122.4 555.4L1135.3 550.8L1148.3 546.4L1161.4 542.2L1174.5 538.1L1187.7 534.2L1200.9 530.4L1214.2 526.6L1227.4 523.0L1240.7 519.3L1254.0 515.7L1267.2 512.0L1280.4 508.3L1293.6 504.5L1306.7 500.6L1324.0 491.0L1331.0 517.7L1331.3 518.2L1318.8 524.2L1306.2 529.7L1293.3 534.7L1280.3 539.3L1267.2 543.6L1254.0 547.7L1240.8 551.6L1227.4 555.4L1214.1 559.1L1200.8 562.9L1187.5 566.7L1174.2 570.7L1161.0 574.9L1147.9 579.1L1134.8 583.5L1121.7 588.0L1108.7 592.5L1095.6 597.0L1082.6 601.6L1069.6 606.2L1056.5 610.8L1043.4 615.3L1030.4 620.0L1017.6 625.1L1005.1 630.8L992.7 637.0L980.5 643.5L968.4 650.1L956.1 656.5L943.8 662.7L931.4 668.7L918.8 674.3L906.1 679.8L893.4 685.0L880.5 690.0L867.6 694.7L854.6 699.2L841.5 703.5L828.3 707.6L815.0 711.5L801.7 715.2L788.3 718.7L774.8 722.0L761.3 725.1L747.8 728.0L734.1 730.7L720.5 733.3L706.8 735.7L693.1 738.0L679.3 740.1L665.5 742.1L651.7 743.8L638.0 745.1L624.3 745.8L610.8 745.5L597.6 744.1L584.6 741.3L572.1 736.9L559.9 730.5L548.1 722.5L536.7 713.4L525.6 703.9L514.8 694.6L504.3 685.5L494.3 676.2L484.9 666.7L476.2 656.8Z" fill="#9d9d9d" stroke="#9d9d9d" stroke-width="2"/>
<path d="M476.2 656.8L484.9 666.7L494.3 676.2L504.3 685.5L514.8 694.6L525.6 703.9L536.7 713.4L548.1 722.5L559.9 730.5L572.1 736.9L584.6 741.3L597.6 744.1L610.8 745.5L624.3 745.8L638.0 745.1L651.7 743.8L665.5 742.1L679.3 740.1L693.1 738.0L706.8 735.7L720.5 733.3L734.1 730.7L747.8 728.0L761.3 725.1L774.8 722.0L788.3 718.7L801.7 715.2L815.0 711.5L828.3 707.6L841.5 703.5L854.6 699.2L867.6 694.7L880.5 690.0L893.4 685.0L906.1 679.8L918.8 674.3L931.4 668.7L943.8 662.7L956.1 656.5L968.4 650.1L980.5 643.5L992.7 637.0L1005.1 630.8L1017.6 625.1L1030.4 620.0L1043.4 615.3L1056.5 610.8L1069.6 606.2L1082.6 601.6L1095.6 597.0L1108.7 592.5L1121.7 588.0L1134.8 583.5L1147.9 579.1L1161.0 574.9L1174.2 570.7L1187.5 566.7L1200.8 562.9L1214.1 559.1L1227.4 555.4L1240.8 551.6L1254.0 547.7L1267.2 543.6L1280.3 539.3L1293.3 534.7L1306.2 529.7L1318.8 524.2L1331.3 518.2L1329.4 542.8L1316.7 548.5L1304.0 553.9L1291.1 558.9L1278.2 563.7L1265.1 568.2L1251.9 572.5L1238.7 576.7L1225.5 580.7L1212.2 584.6L1198.9 588.5L1185.5 592.3L1172.2 596.1L1158.9 600.0L1145.6 603.9L1132.3 608.0L1119.1 612.1L1105.9 616.3L1092.7 620.6L1079.6 625.0L1066.5 629.5L1053.4 634.2L1040.4 639.1L1027.6 644.4L1015.3 650.5L1003.4 657.6L992.0 665.4L980.7 673.6L969.5 681.8L958.1 689.8L946.5 697.3L934.6 704.2L922.5 710.8L910.1 716.9L897.6 722.6L884.9 727.9L872.0 733.0L859.1 737.9L846.0 742.5L832.9 746.9L819.7 751.2L806.5 755.3L793.2 759.2L779.8 762.9L766.4 766.4L752.9 769.7L739.3 772.8L725.7 775.7L712.1 778.4L698.4 780.9L684.6 783.1L670.8 785.1L656.9 786.8L643.1 788.2L629.3 788.9L615.7 788.8L602.3 787.6L589.2 785.2L576.5 781.3L564.2 775.7L552.4 768.3L541.1 759.5L530.0 750.0L519.2 740.4L508.5 731.0L498.1 721.9L487.7 713.2L477.5 705.1Z" fill="#979797" stroke="#979797" stroke-width="2"/>
<path d="M477.5 705.1L487.7 713.2L498.1 721.9L508.5 731.0L519.2 740.4L530.0 750.0L541.1 759.5L552.4 768.3L564.2 775.7L576.5 781.3L589.2 785.2L602.3 787.6L615.7 788.8L629.3 788.9L643.1 788.2L656.9 786.8L670.8 785.1L684.6 783.1L698.4 780.9L712.1 778.4L725.7 775.7L739.3 772.8L752.9 769.7L766.4 766.4L779.8 762.9L793.2 759.2L806.5 755.3L819.7 751.2L832.9 746.9L846.0 742.5L859.1 737.9L872.0 733.0L884.9 727.9L897.6 722.6L910.1 716.9L922.5 710.8L934.6 704.2L946.5 697.3L958.1 689.8L969.5 681.8L980.7 673.6L992.0 665.4L1003.4 657.6L1015.3 650.5L1027.6 644.4L1040.4 639.1L1053.4 634.2L1066.5 629.5L1079.6 625.0L1092.7 620.6L1105.9 616.3L1119.1 612.1L1132.3 608.0L1145.6 603.9L1158.9 600.0L1172.2 596.1L1185.5 592.3L1198.9 588.5L1212.2 584.6L1225.5 580.7L1238.7 576.7L1251.9 572.5L1265.1 568.2L1278.2 563.7L1291.1 558.9L1304.0 553.9L1316.7 548.5L1329.4 542.8L1326.2 555.3L1315.2 568.1L1304.2 577.2L1294.6 580.5L1281.6 585.7L1268.6 590.7L1255.5 595.4L1242.4 600.0L1229.3 604.5L1216.2 608.8L1203.1 613.0L1189.9 617.2L1176.7 621.2L1163.5 625.2L1150.3 629.2L1137.1 633.2L1123.9 637.3L1110.6 641.3L1097.4 645.5L1084.1 649.7L1070.8 654.0L1057.6 658.5L1044.5 663.2L1031.5 668.3L1018.8 673.8L1006.3 679.7L994.2 686.3L982.5 693.5L971.3 701.4L960.7 710.1L950.6 719.5L940.2 728.5L929.1 736.5L917.3 743.6L905.0 749.9L892.5 755.6L879.7 760.8L866.7 765.7L853.6 770.3L840.4 774.6L827.1 778.7L813.8 782.7L800.5 786.6L787.1 790.4L773.8 794.1L760.4 797.6L746.9 801.0L733.5 804.1L719.9 807.0L706.4 809.7L692.8 812.1L679.1 814.3L665.4 816.1L651.5 817.7L637.7 818.9L617.4 816.2L599.6 808.6L579.3 795.9L553.9 778.1L528.5 757.8L503.1 736.2L487.9 722.2L479.0 709.5Z" fill="#909090" stroke="#909090" stroke-width="2"/>
</g>
<path d="M579.3 795.9C575.1 792.9 562.4 784.5 553.9 778.1C545.4 771.8 537.0 764.8 528.5 757.8C520.0 750.8 509.9 742.1 503.1 736.2C496.3 730.3 491.9 726.7 487.9 722.2C483.9 717.8 481.1 713.7 479.0 709.5C476.9 705.3 475.8 702.3 475.2 696.8C474.6 691.3 475.0 683.7 475.2 676.5C475.4 669.3 476.2 657.4 476.4 653.6" fill="none" stroke="#000" stroke-opacity="0.10" stroke-width="26" filter="url(#blur6)"/>
<path d="M640.1 708.3L628.7 702.1L617.7 695.6L606.8 688.5L596.2 681.2L585.8 673.5L575.5 665.7L565.3 657.6L555.3 649.5L545.4 641.2L535.6 632.7L526.1 624.0L516.9 614.9L508.1 605.6L520.7 599.6L533.3 593.9L545.9 588.2L558.5 582.6L571.2 577.2L584.0 572.0L597.0 567.1L610.0 562.7L623.2 558.6L636.5 554.9L649.8 551.5L663.3 548.3L676.8 545.3L690.3 542.4L703.9 539.6L717.4 536.8L730.9 534.1L744.5 531.3L758.0 528.6L771.5 525.8L785.1 523.0L798.6 520.1L812.0 517.1L825.5 514.1L838.9 511.0L852.4 507.9L865.9 505.1L879.5 502.4L893.0 499.9L906.5 497.2L920.0 494.3L933.3 491.0L946.6 487.3L959.7 483.1L972.7 478.7L985.8 474.2L998.9 469.8L1012.0 465.4L1025.0 461.0L1038.2 456.6L1051.3 452.2L1064.4 447.8L1077.5 443.2L1090.5 438.7L1103.6 434.2L1116.8 429.8L1130.0 425.7L1143.2 421.9L1156.6 418.4L1170.0 415.5L1183.6 413.1L1197.2 411.5L1211.1 410.6L1216.5 411.9L1223.9 416.4L1234.8 424.7L1249.4 436.5L1262.2 446.6L1275.0 455.8L1289.6 467.6L1300.6 476.7L1306.1 480.4L1308.8 487.7L1307.9 495.0L1306.7 500.5L1293.6 504.5L1280.4 508.3L1267.2 512.0L1254.0 515.7L1240.7 519.3L1227.4 523.0L1214.2 526.6L1200.9 530.4L1187.7 534.2L1174.5 538.1L1161.4 542.2L1148.3 546.4L1135.3 550.8L1122.4 555.4L1109.5 560.2L1096.8 565.3L1084.1 570.6L1071.6 576.1L1059.1 581.8L1046.7 587.7L1034.3 593.6L1021.9 599.4L1009.5 605.3L997.0 611.0L984.5 616.6L971.9 622.0L959.2 627.1L946.4 632.0L933.6 636.6L920.6 641.0L907.5 645.1L894.4 649.1L881.2 652.9L868.0 656.5L854.7 659.9L841.4 663.3L828.0 666.5L814.6 669.6L801.2 672.7L787.8 675.6L774.3 678.6L760.9 681.5L747.4 684.3L734.0 687.2L720.5 690.1L707.1 693.0L693.7 695.9L680.3 699.0L666.9 702.0L653.6 705.2L640.3 708.5Z" fill="#a1a1a1" filter="url(#blur2)"/>
<path d="M640.1 708.3L628.7 702.1L617.7 695.6L606.8 688.5L596.2 681.2L585.8 673.5L575.5 665.7L565.3 657.6L555.3 649.5L545.4 641.2L535.6 632.7L526.1 624.0L516.9 614.9L508.1 605.6L520.7 599.6L533.3 593.9L545.9 588.2L558.5 582.6L571.2 577.2L584.0 572.0L597.0 567.1L610.0 562.7L623.2 558.6L636.5 554.9L649.8 551.5L663.3 548.3L676.8 545.3L690.3 542.4L703.9 539.6L717.4 536.8L730.9 534.1L744.5 531.3L758.0 528.6L771.5 525.8L785.1 523.0L798.6 520.1L812.0 517.1L825.5 514.1L838.9 511.0L852.4 507.9L865.9 505.1L879.5 502.4L893.0 499.9L906.5 497.2L920.0 494.3L933.3 491.0L946.6 487.3L959.7 483.1L972.7 478.7L985.8 474.2L998.9 469.8L1012.0 465.4L1025.0 461.0L1038.2 456.6L1051.3 452.2L1064.4 447.8L1077.5 443.2L1090.5 438.7L1103.6 434.2L1116.8 429.8L1130.0 425.7L1143.2 421.9L1156.6 418.4L1170.0 415.5L1183.6 413.1L1197.2 411.5L1211.1 410.6L1216.5 411.9L1223.9 416.4L1234.8 424.7L1249.4 436.5L1262.2 446.6L1275.0 455.8L1289.6 467.6L1300.6 476.7L1306.1 480.4L1308.8 487.7L1307.9 495.0L1306.7 500.5L1293.6 504.5L1280.4 508.3L1267.2 512.0L1254.0 515.7L1240.7 519.3L1227.4 523.0L1214.2 526.6L1200.9 530.4L1187.7 534.2L1174.5 538.1L1161.4 542.2L1148.3 546.4L1135.3 550.8L1122.4 555.4L1109.5 560.2L1096.8 565.3L1084.1 570.6L1071.6 576.1L1059.1 581.8L1046.7 587.7L1034.3 593.6L1021.9 599.4L1009.5 605.3L997.0 611.0L984.5 616.6L971.9 622.0L959.2 627.1L946.4 632.0L933.6 636.6L920.6 641.0L907.5 645.1L894.4 649.1L881.2 652.9L868.0 656.5L854.7 659.9L841.4 663.3L828.0 666.5L814.6 669.6L801.2 672.7L787.8 675.6L774.3 678.6L760.9 681.5L747.4 684.3L734.0 687.2L720.5 690.1L707.1 693.0L693.7 695.9L680.3 699.0L666.9 702.0L653.6 705.2L640.3 708.5Z" fill="#a1a1a1"/>
<path d="M642.2 718.2C644.4 717.7 651.1 716.3 655.5 715.3C659.9 714.3 664.3 713.3 668.8 712.4C673.2 711.4 677.6 710.4 682.1 709.4C686.5 708.5 690.9 707.5 695.4 706.5C699.8 705.5 704.2 704.6 708.6 703.6C713.1 702.6 717.5 701.6 721.9 700.7C726.3 699.7 730.8 698.7 735.2 697.7C739.6 696.7 744.0 695.7 748.5 694.7C752.9 693.7 757.3 692.7 761.7 691.7C766.1 690.7 770.6 689.7 775.0 688.7C779.4 687.7 783.8 686.7 788.2 685.6C792.6 684.6 797.1 683.6 801.5 682.6C805.9 681.5 810.3 680.5 814.7 679.4C819.1 678.4 823.5 677.3 827.9 676.3C832.3 675.2 836.7 674.1 841.1 673.0C845.5 672.0 849.9 670.9 854.3 669.8C858.7 668.7 863.1 667.5 867.5 666.4C871.9 665.3 876.3 664.2 880.7 663.0C885.1 661.9 889.4 660.7 893.8 659.6C898.2 658.4 902.6 657.2 907.0 656.1C911.3 654.9 917.9 653.1 920.1 652.5" fill="none" stroke="#ffffff" stroke-opacity="0.62" stroke-width="8" stroke-linecap="round" filter="url(#blur3)"/>
<path d="M920.5 652.3C922.7 651.6 929.2 649.4 933.5 647.8C937.9 646.3 942.2 644.6 946.4 642.9C950.7 641.2 954.9 639.5 959.2 637.7C963.4 635.9 967.6 634.1 971.8 632.2C976.0 630.4 980.2 628.5 984.4 626.5C988.6 624.6 992.7 622.7 996.9 620.7C1001.1 618.8 1005.2 616.8 1009.4 614.8C1013.5 612.8 1017.7 610.8 1021.8 608.9C1026.0 606.9 1030.2 604.9 1034.3 603.0C1038.5 601.0 1042.7 599.1 1046.9 597.2C1051.0 595.2 1055.2 593.3 1059.4 591.4C1063.6 589.5 1067.8 587.7 1072.0 585.8C1076.2 584.0 1080.5 582.1 1084.7 580.3C1088.9 578.5 1093.2 576.8 1097.4 575.0C1101.7 573.3 1106.0 571.6 1110.3 569.9C1114.6 568.2 1118.9 566.6 1123.2 565.0C1127.5 563.4 1131.8 561.9 1136.2 560.4C1140.5 558.8 1144.9 557.3 1149.3 555.9C1153.6 554.4 1158.0 553.0 1162.4 551.6C1166.8 550.2 1171.2 548.8 1175.6 547.4C1180.0 546.1 1184.4 544.7 1188.9 543.4C1193.3 542.1 1197.7 540.8 1202.2 539.5C1206.6 538.2 1211.0 536.9 1215.5 535.7C1219.9 534.4 1224.4 533.2 1228.8 531.9C1233.3 530.7 1237.7 529.5 1242.2 528.2C1246.6 527.0 1251.1 525.8 1255.5 524.6C1260.0 523.4 1264.4 522.1 1268.9 520.9C1273.3 519.7 1277.8 518.5 1282.2 517.2C1286.6 516.0 1291.1 514.8 1295.5 513.5C1299.9 512.3 1306.6 510.4 1308.8 509.8" fill="none" stroke="#ffffff" stroke-opacity="0.22" stroke-width="9" stroke-linecap="round" filter="url(#blur3)"/>
<path d="M560.0 664.7C565.9 669.4 582.9 684.4 595.6 693.1C608.3 701.9 629.4 713.2 636.2 717.2" fill="none" stroke="#ffffff" stroke-opacity="0.15" stroke-width="10" stroke-linecap="round" filter="url(#blur3)"/>
<ellipse cx="615" cy="712" rx="9" ry="5" fill="#fff" fill-opacity="0.8" filter="url(#blur25)" transform="rotate(-25 615 712)"/>
<path d="M1315.2 568.1C1313.4 569.6 1307.6 575.1 1304.2 577.2C1300.8 579.3 1298.4 579.1 1294.6 580.5C1290.9 581.9 1286.0 584.0 1281.6 585.7C1277.3 587.4 1272.9 589.0 1268.6 590.7C1264.2 592.3 1259.9 593.9 1255.5 595.4C1251.2 597.0 1246.8 598.5 1242.4 600.0C1238.1 601.5 1233.7 603.0 1229.3 604.5C1225.0 605.9 1220.6 607.4 1216.2 608.8C1211.8 610.2 1207.4 611.6 1203.1 613.0C1198.7 614.4 1194.3 615.8 1189.9 617.2C1185.5 618.5 1181.1 619.9 1176.7 621.2C1172.3 622.6 1167.9 623.9 1163.5 625.2C1159.1 626.6 1154.7 627.9 1150.3 629.2C1145.9 630.6 1141.5 631.9 1137.1 633.2C1132.7 634.6 1128.3 635.9 1123.9 637.3C1119.5 638.6 1115.0 640.0 1110.6 641.3C1106.2 642.7 1101.8 644.1 1097.4 645.5C1093.0 646.8 1088.5 648.2 1084.1 649.7C1079.7 651.1 1075.3 652.5 1070.8 654.0C1066.4 655.5 1062.0 657.0 1057.6 658.5C1053.2 660.0 1048.8 661.6 1044.5 663.2C1040.1 664.9 1035.8 666.5 1031.5 668.3C1027.2 670.0 1023.0 671.9 1018.8 673.8C1014.6 675.7 1010.4 677.6 1006.3 679.7C1002.2 681.8 998.2 684.0 994.2 686.3C990.2 688.6 986.3 690.9 982.5 693.5C978.7 696.0 975.0 698.6 971.3 701.4C967.7 704.1 964.2 707.1 960.7 710.1C957.3 713.1 954.0 716.4 950.6 719.5C947.2 722.5 943.8 725.7 940.2 728.5C936.6 731.4 932.9 734.0 929.1 736.5C925.3 739.0 921.3 741.4 917.3 743.6C913.3 745.8 909.2 747.9 905.0 749.9C900.9 751.9 896.7 753.8 892.5 755.6C888.2 757.4 884.0 759.2 879.7 760.8C875.4 762.5 871.0 764.1 866.7 765.7C862.3 767.3 858.0 768.8 853.6 770.3C849.2 771.7 844.8 773.2 840.4 774.6C835.9 776.0 831.5 777.3 827.1 778.7C822.7 780.1 818.2 781.4 813.8 782.7C809.3 784.0 804.9 785.3 800.5 786.6C796.0 787.9 791.6 789.2 787.1 790.4C782.7 791.7 778.2 792.9 773.8 794.1C769.3 795.3 764.8 796.5 760.4 797.6C755.9 798.8 751.4 799.9 746.9 801.0C742.4 802.0 738.0 803.1 733.5 804.1C729.0 805.1 724.5 806.1 719.9 807.0C715.4 808.0 710.9 808.9 706.4 809.7C701.9 810.6 697.3 811.4 692.8 812.1C688.2 812.9 683.7 813.6 679.1 814.3C674.5 815.0 669.9 815.6 665.4 816.1C660.8 816.7 656.2 817.2 651.5 817.7C646.9 818.1 643.4 819.1 637.7 818.9C632.0 818.6 623.7 817.9 617.4 816.2C611.1 814.5 606.0 812.0 599.6 808.6C593.2 805.2 586.9 801.0 579.3 795.9C571.7 790.8 562.4 784.5 553.9 778.1C545.4 771.8 537.0 764.8 528.5 757.8C520.0 750.8 509.9 742.1 503.1 736.2C496.3 730.3 490.4 724.5 487.9 722.2" fill="none" stroke="#000" stroke-opacity="0.28" stroke-width="9" filter="url(#blur25)"/>
<g fill="#a6a6a6" fill-opacity="0.18" stroke="#5a5a5a" stroke-opacity="0.34" stroke-width="1.3"><circle r="1" vector-effect="non-scaling-stroke" transform="matrix(5.94 4.77 9.39 -2.79 1098.9 448.3)"/><circle r="1" vector-effect="non-scaling-stroke" transform="matrix(5.94 4.77 9.39 -2.79 1142.0 435.6)"/><circle r="1" vector-effect="non-scaling-stroke" transform="matrix(5.94 4.77 9.39 -2.79 1176.3 428.0)"/><circle r="1" vector-effect="non-scaling-stroke" transform="matrix(5.94 4.77 9.39 -2.79 1171.3 454.7)"/><circle r="1" vector-effect="non-scaling-stroke" transform="matrix(5.94 4.77 9.39 -2.79 1138.2 473.7)"/><circle r="1" vector-effect="non-scaling-stroke" transform="matrix(5.94 4.77 9.39 -2.79 1192.8 472.5)"/><circle r="1" vector-effect="non-scaling-stroke" transform="matrix(5.94 4.77 9.39 -2.79 1101.4 485.1)"/><circle r="1" vector-effect="non-scaling-stroke" transform="matrix(5.94 4.77 9.39 -2.79 1168.7 501.7)"/><circle r="1" vector-effect="non-scaling-stroke" transform="matrix(5.94 4.77 9.39 -2.79 1213.2 491.5)"/><circle r="1" vector-effect="non-scaling-stroke" transform="matrix(5.94 4.77 9.39 -2.79 1131.9 514.3)"/><circle r="1" vector-effect="non-scaling-stroke" transform="matrix(5.94 4.77 9.39 -2.79 1097.6 524.5)"/><circle r="1" vector-effect="non-scaling-stroke" transform="matrix(5.94 4.77 9.39 -2.79 988.2 484.4)"/><circle r="1" vector-effect="non-scaling-stroke" transform="matrix(5.94 4.77 9.39 -2.79 1026.3 470.5)"/><circle r="1" vector-effect="non-scaling-stroke" transform="matrix(5.94 4.77 9.39 -2.79 1064.4 459.0)"/><circle r="1" vector-effect="non-scaling-stroke" transform="matrix(5.94 4.77 9.39 -2.79 1028.9 508.6)"/><circle r="1" vector-effect="non-scaling-stroke" transform="matrix(5.94 4.77 9.39 -2.79 1064.4 497.1)"/><circle r="1" vector-effect="non-scaling-stroke" transform="matrix(5.94 4.77 9.39 -2.79 1102.5 484.4)"/><circle r="1" vector-effect="non-scaling-stroke" transform="matrix(5.94 4.77 9.39 -2.79 1061.9 537.8)"/><circle r="1" vector-effect="non-scaling-stroke" transform="matrix(5.94 4.77 9.39 -2.79 1135.5 513.6)"/><circle r="1" vector-effect="non-scaling-stroke" transform="matrix(5.59 4.49 14.35 -4.27 548.4 607.7)"/><circle r="1" vector-effect="non-scaling-stroke" transform="matrix(5.59 4.49 14.35 -4.27 583.7 597.4)"/><circle r="1" vector-effect="non-scaling-stroke" transform="matrix(5.59 4.49 14.35 -4.27 607.3 619.5)"/><circle r="1" vector-effect="non-scaling-stroke" transform="matrix(5.59 4.49 14.35 -4.27 632.3 641.6)"/><circle r="1" vector-effect="non-scaling-stroke" transform="matrix(5.59 4.49 14.35 -4.27 663.2 659.3)"/><circle r="1" vector-effect="non-scaling-stroke" transform="matrix(5.59 4.49 14.35 -4.27 688.3 575.3)"/><circle r="1" vector-effect="non-scaling-stroke" transform="matrix(11.89 9.54 7.73 -2.30 633.8 603.3)"/><circle r="1" vector-effect="non-scaling-stroke" transform="matrix(11.89 9.54 7.73 -2.30 675.0 637.2)"/><circle r="1" vector-effect="non-scaling-stroke" transform="matrix(11.89 9.54 7.73 -2.30 624.9 575.3)"/><circle r="1" vector-effect="non-scaling-stroke" transform="matrix(11.19 8.98 7.18 -2.13 678.0 691.9)"/><circle r="1" vector-effect="non-scaling-stroke" transform="matrix(11.19 8.98 7.18 -2.13 704.9 651.6)"/><circle r="1" vector-effect="non-scaling-stroke" transform="matrix(5.59 4.49 13.25 -3.94 717.7 680.1)"/><circle r="1" vector-effect="non-scaling-stroke" transform="matrix(5.59 4.49 13.25 -3.94 685.9 592.6)"/><circle r="1" vector-effect="non-scaling-stroke" transform="matrix(11.19 8.98 7.18 -2.13 698.7 621.1)"/><circle r="1" vector-effect="non-scaling-stroke" transform="matrix(5.59 4.49 13.25 -3.94 744.7 639.8)"/><circle r="1" vector-effect="non-scaling-stroke" transform="matrix(11.19 8.98 7.18 -2.13 757.5 668.2)"/><circle r="1" vector-effect="non-scaling-stroke" transform="matrix(5.59 4.49 13.25 -3.94 679.7 562.2)"/><circle r="1" vector-effect="non-scaling-stroke" transform="matrix(11.19 8.98 7.18 -2.13 725.7 580.8)"/><circle r="1" vector-effect="non-scaling-stroke" transform="matrix(5.59 4.49 13.25 -3.94 738.5 609.3)"/><circle r="1" vector-effect="non-scaling-stroke" transform="matrix(11.19 8.98 7.18 -2.13 784.4 627.9)"/><circle r="1" vector-effect="non-scaling-stroke" transform="matrix(5.59 4.49 13.25 -3.94 797.2 656.4)"/><circle r="1" vector-effect="non-scaling-stroke" transform="matrix(11.19 8.98 7.18 -2.13 719.5 550.4)"/><circle r="1" vector-effect="non-scaling-stroke" transform="matrix(5.59 4.49 13.25 -3.94 765.4 569.0)"/><circle r="1" vector-effect="non-scaling-stroke" transform="matrix(11.19 8.98 7.18 -2.13 778.2 597.5)"/><circle r="1" vector-effect="non-scaling-stroke" transform="matrix(5.59 4.49 13.25 -3.94 824.2 616.1)"/><circle r="1" vector-effect="non-scaling-stroke" transform="matrix(11.19 8.98 7.18 -2.13 837.0 644.6)"/><circle r="1" vector-effect="non-scaling-stroke" transform="matrix(5.59 4.49 13.25 -3.94 759.2 538.5)"/><circle r="1" vector-effect="non-scaling-stroke" transform="matrix(5.59 4.49 13.25 -3.94 876.7 632.8)"/></g>
<g fill="none" stroke="#dcdcdc" stroke-opacity="0.35" stroke-width="1" transform="translate(0.8 1.2)"><circle r="1" vector-effect="non-scaling-stroke" transform="matrix(5.94 4.77 9.39 -2.79 1098.9 448.3)"/><circle r="1" vector-effect="non-scaling-stroke" transform="matrix(5.94 4.77 9.39 -2.79 1142.0 435.6)"/><circle r="1" vector-effect="non-scaling-stroke" transform="matrix(5.94 4.77 9.39 -2.79 1176.3 428.0)"/><circle r="1" vector-effect="non-scaling-stroke" transform="matrix(5.94 4.77 9.39 -2.79 1171.3 454.7)"/><circle r="1" vector-effect="non-scaling-stroke" transform="matrix(5.94 4.77 9.39 -2.79 1138.2 473.7)"/><circle r="1" vector-effect="non-scaling-stroke" transform="matrix(5.94 4.77 9.39 -2.79 1192.8 472.5)"/><circle r="1" vector-effect="non-scaling-stroke" transform="matrix(5.94 4.77 9.39 -2.79 1101.4 485.1)"/><circle r="1" vector-effect="non-scaling-stroke" transform="matrix(5.94 4.77 9.39 -2.79 1168.7 501.7)"/><circle r="1" vector-effect="non-scaling-stroke" transform="matrix(5.94 4.77 9.39 -2.79 1213.2 491.5)"/><circle r="1" vector-effect="non-scaling-stroke" transform="matrix(5.94 4.77 9.39 -2.79 1131.9 514.3)"/><circle r="1" vector-effect="non-scaling-stroke" transform="matrix(5.94 4.77 9.39 -2.79 1097.6 524.5)"/><circle r="1" vector-effect="non-scaling-stroke" transform="matrix(5.94 4.77 9.39 -2.79 988.2 484.4)"/><circle r="1" vector-effect="non-scaling-stroke" transform="matrix(5.94 4.77 9.39 -2.79 1026.3 470.5)"/><circle r="1" vector-effect="non-scaling-stroke" transform="matrix(5.94 4.77 9.39 -2.79 1064.4 459.0)"/><circle r="1" vector-effect="non-scaling-stroke" transform="matrix(5.94 4.77 9.39 -2.79 1028.9 508.6)"/><circle r="1" vector-effect="non-scaling-stroke" transform="matrix(5.94 4.77 9.39 -2.79 1064.4 497.1)"/><circle r="1" vector-effect="non-scaling-stroke" transform="matrix(5.94 4.77 9.39 -2.79 1102.5 484.4)"/><circle r="1" vector-effect="non-scaling-stroke" transform="matrix(5.94 4.77 9.39 -2.79 1061.9 537.8)"/><circle r="1" vector-effect="non-scaling-stroke" transform="matrix(5.94 4.77 9.39 -2.79 1135.5 513.6)"/><circle r="1" vector-effect="non-scaling-stroke" transform="matrix(5.59 4.49 14.35 -4.27 548.4 607.7)"/><circle r="1" vector-effect="non-scaling-stroke" transform="matrix(5.59 4.49 14.35 -4.27 583.7 597.4)"/><circle r="1" vector-effect="non-scaling-stroke" transform="matrix(5.59 4.49 14.35 -4.27 607.3 619.5)"/><circle r="1" vector-effect="non-scaling-stroke" transform="matrix(5.59 4.49 14.35 -4.27 632.3 641.6)"/><circle r="1" vector-effect="non-scaling-stroke" transform="matrix(5.59 4.49 14.35 -4.27 663.2 659.3)"/><circle r="1" vector-effect="non-scaling-stroke" transform="matrix(5.59 4.49 14.35 -4.27 688.3 575.3)"/><circle r="1" vector-effect="non-scaling-stroke" transform="matrix(11.89 9.54 7.73 -2.30 633.8 603.3)"/><circle r="1" vector-effect="non-scaling-stroke" transform="matrix(11.89 9.54 7.73 -2.30 675.0 637.2)"/><circle r="1" vector-effect="non-scaling-stroke" transform="matrix(11.89 9.54 7.73 -2.30 624.9 575.3)"/><circle r="1" vector-effect="non-scaling-stroke" transform="matrix(11.19 8.98 7.18 -2.13 678.0 691.9)"/><circle r="1" vector-effect="non-scaling-stroke" transform="matrix(11.19 8.98 7.18 -2.13 704.9 651.6)"/><circle r="1" vector-effect="non-scaling-stroke" transform="matrix(5.59 4.49 13.25 -3.94 717.7 680.1)"/><circle r="1" vector-effect="non-scaling-stroke" transform="matrix(5.59 4.49 13.25 -3.94 685.9 592.6)"/><circle r="1" vector-effect="non-scaling-stroke" transform="matrix(11.19 8.98 7.18 -2.13 698.7 621.1)"/><circle r="1" vector-effect="non-scaling-stroke" transform="matrix(5.59 4.49 13.25 -3.94 744.7 639.8)"/><circle r="1" vector-effect="non-scaling-stroke" transform="matrix(11.19 8.98 7.18 -2.13 757.5 668.2)"/><circle r="1" vector-effect="non-scaling-stroke" transform="matrix(5.59 4.49 13.25 -3.94 679.7 562.2)"/><circle r="1" vector-effect="non-scaling-stroke" transform="matrix(11.19 8.98 7.18 -2.13 725.7 580.8)"/><circle r="1" vector-effect="non-scaling-stroke" transform="matrix(5.59 4.49 13.25 -3.94 738.5 609.3)"/><circle r="1" vector-effect="non-scaling-stroke" transform="matrix(11.19 8.98 7.18 -2.13 784.4 627.9)"/><circle r="1" vector-effect="non-scaling-stroke" transform="matrix(5.59 4.49 13.25 -3.94 797.2 656.4)"/><circle r="1" vector-effect="non-scaling-stroke" transform="matrix(11.19 8.98 7.18 -2.13 719.5 550.4)"/><circle r="1" vector-effect="non-scaling-stroke" transform="matrix(5.59 4.49 13.25 -3.94 765.4 569.0)"/><circle r="1" vector-effect="non-scaling-stroke" transform="matrix(11.19 8.98 7.18 -2.13 778.2 597.5)"/><circle r="1" vector-effect="non-scaling-stroke" transform="matrix(5.59 4.49 13.25 -3.94 824.2 616.1)"/><circle r="1" vector-effect="non-scaling-stroke" transform="matrix(11.19 8.98 7.18 -2.13 837.0 644.6)"/><circle r="1" vector-effect="non-scaling-stroke" transform="matrix(5.59 4.49 13.25 -3.94 759.2 538.5)"/><circle r="1" vector-effect="non-scaling-stroke" transform="matrix(5.59 4.49 13.25 -3.94 876.7 632.8)"/></g>
</g>
<path d="M508.1 605.6C509.5 607.1 513.9 611.9 516.9 614.9C519.9 618.0 523.0 621.0 526.1 624.0C529.2 626.9 532.4 629.8 535.6 632.7C538.8 635.6 542.1 638.4 545.4 641.2C548.6 644.0 552.0 646.7 555.3 649.5C558.6 652.2 562.0 654.9 565.3 657.6C568.7 660.3 572.1 663.0 575.5 665.7C578.9 668.3 582.3 671.0 585.8 673.5C589.2 676.1 592.7 678.7 596.2 681.2C599.7 683.7 603.2 686.2 606.8 688.5C610.4 690.9 614.0 693.3 617.7 695.6C621.3 697.8 625.0 700.0 628.7 702.1C632.5 704.3 638.2 707.3 640.1 708.3M640.3 708.5C642.5 708.0 649.2 706.3 653.6 705.2C658.0 704.1 662.5 703.1 666.9 702.0C671.4 701.0 675.8 700.0 680.3 699.0C684.8 697.9 689.2 696.9 693.7 695.9C698.2 694.9 702.6 694.0 707.1 693.0C711.6 692.0 716.1 691.0 720.5 690.1C725.0 689.1 729.5 688.2 734.0 687.2C738.5 686.2 742.9 685.3 747.4 684.3C751.9 683.4 756.4 682.4 760.9 681.5C765.4 680.5 769.9 679.5 774.3 678.6C778.8 677.6 783.3 676.6 787.8 675.6C792.3 674.7 796.7 673.7 801.2 672.7C805.7 671.7 810.1 670.6 814.6 669.6C819.1 668.6 823.5 667.5 828.0 666.5C832.5 665.4 836.9 664.4 841.4 663.3C845.8 662.2 850.3 661.1 854.7 659.9C859.1 658.8 863.6 657.6 868.0 656.5C872.4 655.3 876.8 654.1 881.2 652.9C885.6 651.6 890.0 650.4 894.4 649.1C898.8 647.8 903.2 646.5 907.5 645.1C911.9 643.8 916.3 642.4 920.6 641.0C924.9 639.5 929.3 638.1 933.6 636.6C937.9 635.1 942.2 633.5 946.4 632.0C950.7 630.4 955.0 628.8 959.2 627.1C963.5 625.4 967.7 623.7 971.9 622.0C976.1 620.2 980.3 618.4 984.5 616.6C988.7 614.8 992.9 612.9 997.0 611.0C1001.2 609.1 1005.3 607.2 1009.5 605.3C1013.6 603.4 1017.7 601.4 1021.9 599.4C1026.0 597.5 1030.1 595.5 1034.3 593.6C1038.4 591.6 1042.5 589.6 1046.7 587.7C1050.8 585.7 1054.9 583.8 1059.1 581.8C1063.3 579.9 1067.4 578.0 1071.6 576.1C1075.8 574.3 1079.9 572.4 1084.1 570.6C1088.3 568.8 1092.5 567.0 1096.8 565.3C1101.0 563.6 1105.3 561.9 1109.5 560.2C1113.8 558.6 1118.1 557.0 1122.4 555.4C1126.7 553.8 1131.0 552.3 1135.3 550.8C1139.6 549.3 1143.9 547.8 1148.3 546.4C1152.6 545.0 1157.0 543.6 1161.4 542.2C1165.7 540.8 1170.1 539.4 1174.5 538.1C1178.9 536.8 1183.3 535.5 1187.7 534.2C1192.1 532.9 1196.5 531.6 1200.9 530.4C1205.3 529.1 1209.8 527.9 1214.2 526.6C1218.6 525.4 1223.0 524.2 1227.4 523.0C1231.9 521.7 1236.3 520.5 1240.7 519.3C1245.1 518.1 1249.5 516.9 1254.0 515.7C1258.4 514.5 1262.8 513.2 1267.2 512.0C1271.6 510.8 1276.0 509.6 1280.4 508.3C1284.8 507.0 1289.2 505.8 1293.6 504.5C1298.0 503.2 1304.5 501.3 1306.7 500.6M1216.6 411.7C1218.4 413.0 1224.0 416.8 1227.6 419.4C1231.2 422.0 1234.8 424.7 1238.3 427.4C1241.8 430.1 1245.3 432.9 1248.8 435.6C1252.2 438.4 1255.7 441.2 1259.1 444.0C1262.6 446.7 1266.0 449.5 1269.6 452.3C1273.1 455.0 1276.6 457.8 1280.2 460.5C1283.8 463.2 1287.6 465.7 1291.2 468.4C1294.7 471.1 1298.8 473.5 1301.7 476.7C1304.6 479.8 1307.6 483.3 1308.4 487.3C1309.2 491.2 1306.8 498.3 1306.5 500.6M1306.9 500.2C1308.4 501.6 1313.7 505.1 1315.8 508.2C1317.9 511.4 1318.7 515.3 1319.4 519.2C1320.0 523.0 1319.8 527.4 1319.6 531.6C1319.4 535.8 1318.8 540.1 1318.3 544.2C1317.8 548.3 1317.2 552.2 1316.7 556.2C1316.2 560.2 1315.5 566.1 1315.3 568.0M476.2 656.8C477.7 658.4 481.9 663.5 484.9 666.7C487.9 669.9 491.0 673.1 494.3 676.2C497.5 679.3 500.8 682.4 504.3 685.5C507.7 688.5 511.2 691.6 514.8 694.6C518.3 697.7 521.9 700.8 525.6 703.9C529.3 707.0 533.0 710.3 536.7 713.4C540.5 716.5 544.3 719.6 548.1 722.5C552.0 725.4 555.9 728.2 559.9 730.5C563.9 732.9 567.9 735.1 572.1 736.9C576.2 738.7 580.4 740.1 584.6 741.3C588.9 742.5 593.2 743.4 597.6 744.1C602.0 744.8 606.4 745.3 610.8 745.5C615.3 745.8 619.8 745.9 624.3 745.8C628.8 745.7 633.4 745.5 638.0 745.1C642.5 744.8 647.1 744.3 651.7 743.8C656.3 743.3 660.9 742.7 665.5 742.1C670.1 741.4 674.7 740.8 679.3 740.1C683.9 739.4 688.5 738.7 693.1 738.0C697.6 737.3 702.2 736.5 706.8 735.7C711.4 735.0 715.9 734.2 720.5 733.3C725.0 732.5 729.6 731.6 734.1 730.7C738.7 729.9 743.2 728.9 747.8 728.0C752.3 727.0 756.8 726.1 761.3 725.1C765.8 724.1 770.3 723.0 774.8 722.0C779.3 720.9 783.8 719.8 788.3 718.7C792.8 717.5 797.2 716.4 801.7 715.2C806.1 714.0 810.6 712.8 815.0 711.5C819.4 710.3 823.9 709.0 828.3 707.6C832.7 706.3 837.1 704.9 841.5 703.5C845.8 702.1 850.2 700.7 854.6 699.2C858.9 697.8 863.3 696.3 867.6 694.7C871.9 693.2 876.2 691.6 880.5 690.0C884.8 688.4 889.1 686.7 893.4 685.0C897.7 683.3 901.9 681.6 906.1 679.8C910.4 678.0 914.6 676.2 918.8 674.3C923.0 672.5 927.2 670.6 931.4 668.7C935.5 666.7 939.7 664.7 943.8 662.7C947.9 660.7 952.0 658.6 956.1 656.5C960.2 654.4 964.3 652.2 968.4 650.1C972.4 647.9 976.5 645.7 980.5 643.5C984.6 641.3 988.7 639.1 992.7 637.0C996.8 634.9 1000.9 632.8 1005.1 630.8C1009.2 628.8 1013.4 626.9 1017.6 625.1C1021.8 623.3 1026.1 621.6 1030.4 620.0C1034.7 618.3 1039.1 616.8 1043.4 615.3C1047.8 613.8 1052.2 612.3 1056.5 610.8C1060.9 609.2 1065.2 607.7 1069.6 606.2C1073.9 604.7 1078.3 603.2 1082.6 601.6C1087.0 600.1 1091.3 598.6 1095.6 597.0C1100.0 595.5 1104.3 594.0 1108.7 592.5C1113.0 591.0 1117.4 589.5 1121.7 588.0C1126.1 586.5 1130.4 585.0 1134.8 583.5C1139.2 582.0 1143.5 580.6 1147.9 579.1C1152.3 577.7 1156.7 576.3 1161.0 574.9C1165.4 573.5 1169.8 572.1 1174.2 570.7C1178.6 569.4 1183.0 568.0 1187.5 566.7C1191.9 565.4 1196.3 564.1 1200.8 562.9C1205.2 561.6 1209.7 560.4 1214.1 559.1C1218.5 557.9 1223.0 556.6 1227.4 555.4C1231.9 554.1 1236.3 552.9 1240.8 551.6C1245.2 550.3 1249.6 549.0 1254.0 547.7C1258.4 546.4 1262.8 545.0 1267.2 543.6C1271.6 542.2 1276.0 540.8 1280.3 539.3C1284.7 537.8 1289.0 536.3 1293.3 534.7C1297.6 533.1 1301.9 531.4 1306.2 529.7C1310.4 527.9 1314.6 526.1 1318.8 524.2C1323.0 522.3 1329.2 519.2 1331.3 518.2M477.5 705.1C479.2 706.5 484.3 710.4 487.7 713.2C491.1 716.0 494.6 718.9 498.1 721.9C501.5 724.9 505.0 727.9 508.5 731.0C512.1 734.1 515.6 737.2 519.2 740.4C522.8 743.6 526.4 746.8 530.0 750.0C533.7 753.2 537.3 756.4 541.1 759.5C544.8 762.5 548.6 765.6 552.4 768.3C556.3 771.0 560.2 773.5 564.2 775.7C568.2 777.9 572.3 779.7 576.5 781.3C580.6 782.9 584.9 784.2 589.2 785.2C593.5 786.3 597.9 787.0 602.3 787.6C606.7 788.2 611.2 788.6 615.7 788.8C620.2 789.0 624.7 789.0 629.3 788.9C633.9 788.8 638.5 788.5 643.1 788.2C647.7 787.8 652.3 787.4 656.9 786.8C661.5 786.3 666.2 785.7 670.8 785.1C675.4 784.5 680.0 783.8 684.6 783.1C689.2 782.4 693.8 781.6 698.4 780.9C702.9 780.1 707.5 779.3 712.1 778.4C716.6 777.5 721.2 776.7 725.7 775.7C730.3 774.8 734.8 773.8 739.3 772.8C743.9 771.8 748.4 770.8 752.9 769.7C757.4 768.7 761.9 767.6 766.4 766.4C770.9 765.3 775.3 764.1 779.8 762.9C784.3 761.7 788.7 760.5 793.2 759.2C797.6 757.9 802.1 756.6 806.5 755.3C810.9 754.0 815.3 752.6 819.7 751.2C824.1 749.8 828.5 748.4 832.9 746.9C837.3 745.5 841.7 744.0 846.0 742.5C850.4 741.0 854.7 739.4 859.1 737.9C863.4 736.3 867.7 734.7 872.0 733.0C876.3 731.4 880.6 729.7 884.9 727.9C889.1 726.2 893.4 724.4 897.6 722.6C901.8 720.7 906.0 718.8 910.1 716.9C914.3 714.9 918.4 712.9 922.5 710.8C926.5 708.7 930.6 706.5 934.6 704.2C938.6 702.0 942.6 699.7 946.5 697.3C950.4 694.9 954.3 692.4 958.1 689.8C962.0 687.2 965.7 684.5 969.5 681.8C973.3 679.1 977.0 676.3 980.7 673.6C984.5 670.8 988.2 668.1 992.0 665.4C995.8 662.7 999.6 660.1 1003.4 657.6C1007.3 655.1 1011.3 652.7 1015.3 650.5C1019.3 648.3 1023.5 646.3 1027.6 644.4C1031.8 642.5 1036.1 640.8 1040.4 639.1C1044.7 637.4 1049.1 635.8 1053.4 634.2C1057.8 632.6 1062.1 631.1 1066.5 629.5C1070.8 628.0 1075.2 626.5 1079.6 625.0C1084.0 623.5 1088.3 622.0 1092.7 620.6C1097.1 619.1 1101.5 617.7 1105.9 616.3C1110.3 614.8 1114.7 613.4 1119.1 612.1C1123.5 610.7 1127.9 609.3 1132.3 608.0C1136.7 606.6 1141.2 605.3 1145.6 603.9C1150.0 602.6 1154.5 601.3 1158.9 600.0C1163.3 598.7 1167.8 597.4 1172.2 596.1C1176.6 594.8 1181.1 593.6 1185.5 592.3C1190.0 591.0 1194.4 589.7 1198.9 588.5C1203.3 587.2 1207.8 585.9 1212.2 584.6C1216.6 583.3 1221.1 582.0 1225.5 580.7C1229.9 579.4 1234.3 578.0 1238.7 576.7C1243.2 575.3 1247.6 573.9 1251.9 572.5C1256.3 571.1 1260.7 569.7 1265.1 568.2C1269.5 566.7 1273.8 565.2 1278.2 563.7C1282.5 562.1 1286.8 560.5 1291.1 558.9C1295.4 557.3 1299.7 555.6 1304.0 553.9C1308.3 552.1 1312.5 550.4 1316.7 548.5C1321.0 546.7 1327.3 543.8 1329.4 542.8M528.8 627.0C526.8 628.3 520.6 631.6 517.0 634.3C513.5 637.0 510.3 640.1 507.4 643.3C504.5 646.6 502.0 650.1 499.8 653.8C497.6 657.4 495.8 661.3 494.3 665.3C492.7 669.3 491.5 673.5 490.6 677.7C489.7 681.9 489.1 686.3 488.8 690.7C488.5 695.0 488.5 699.5 488.8 703.9C489.1 708.2 489.6 712.7 490.5 717.0C491.3 721.3 493.2 727.7 493.8 729.8M564.0 655.6C562.0 656.7 555.5 659.5 551.9 662.0C548.2 664.5 545.1 667.5 542.3 670.7C539.5 673.8 537.1 677.4 535.1 681.1C533.1 684.8 531.4 688.8 530.1 692.9C528.7 697.0 527.8 701.3 527.0 705.6C526.3 710.0 525.9 714.5 525.7 718.9C525.5 723.3 525.6 727.9 525.8 732.3C526.1 736.7 526.6 741.1 527.2 745.3C527.9 749.5 529.3 755.6 529.7 757.6M599.7 684.1C597.7 685.2 591.3 688.4 587.8 691.1C584.2 693.8 581.1 696.9 578.3 700.2C575.6 703.5 573.2 707.2 571.2 711.0C569.2 714.7 567.5 718.8 566.2 722.9C564.9 727.0 563.9 731.4 563.1 735.7C562.4 740.1 562.0 744.6 561.8 749.0C561.6 753.5 561.7 758.0 562.0 762.5C562.3 766.9 562.9 771.3 563.7 775.6C564.4 779.9 566.0 786.0 566.5 788.1M640.1 708.1C638.7 709.8 634.3 714.5 631.9 718.0C629.5 721.5 627.5 725.2 625.8 729.0C624.1 732.7 622.7 736.7 621.6 740.7C620.5 744.7 619.7 748.9 619.1 753.1C618.5 757.3 618.1 761.6 618.0 765.8C617.8 770.1 617.9 774.4 618.1 778.7C618.3 783.0 618.7 787.3 619.2 791.6C619.7 795.8 620.4 800.0 621.1 804.1C621.8 808.2 623.2 814.1 623.6 816.1M618.4 560.7C620.3 562.1 626.1 566.1 629.8 568.8C633.6 571.5 637.4 574.2 641.1 577.0C644.8 579.7 648.5 582.4 652.2 585.2C655.9 588.0 659.6 590.7 663.2 593.5C666.9 596.3 670.5 599.1 674.1 601.9C677.8 604.8 681.4 607.6 685.0 610.5C688.6 613.3 692.2 616.2 695.9 619.1C699.5 622.0 703.1 625.0 706.7 627.9C710.3 630.9 713.9 633.9 717.5 636.9C721.2 639.9 724.8 642.9 728.4 646.0C732.0 649.1 735.7 652.1 739.2 655.4C742.6 658.6 746.0 661.8 749.0 665.2C752.1 668.7 754.9 672.2 757.3 676.0C759.7 679.7 761.7 683.6 763.2 687.8C764.8 691.9 765.8 696.2 766.6 700.7C767.4 705.1 767.7 709.8 767.8 714.4C768.0 719.1 767.8 723.8 767.6 728.6C767.3 733.3 766.8 738.1 766.3 742.9C765.8 747.6 765.1 752.3 764.5 756.9C763.9 761.6 763.2 766.2 762.6 770.8C762.0 775.4 761.4 779.9 760.9 784.4C760.4 788.9 759.8 795.6 759.5 797.9M901.3 620.9C903.1 622.2 909.3 626.0 912.4 629.0C915.5 632.0 917.9 635.5 920.0 639.1C922.1 642.7 923.6 646.6 924.8 650.7C926.0 654.7 926.8 659.0 927.3 663.3C927.9 667.5 928.1 672.0 928.2 676.4C928.3 680.8 928.1 685.3 927.8 689.7C927.6 694.2 927.1 698.7 926.6 703.1C926.1 707.5 925.5 712.0 924.8 716.3C924.2 720.7 923.4 725.0 922.7 729.2C922.0 733.3 921.0 739.4 920.7 741.5M1007.7 592.7C1008.8 594.5 1012.6 599.6 1014.3 603.3C1016.0 607.0 1017.0 611.0 1017.7 615.0C1018.5 619.0 1018.7 623.2 1018.9 627.4C1019.0 631.6 1018.7 636.0 1018.4 640.2C1018.1 644.5 1017.5 648.8 1017.0 653.1C1016.5 657.3 1015.8 661.6 1015.3 665.7C1014.8 669.8 1014.1 675.7 1013.9 677.7M1074.8 444.9C1076.6 446.2 1082.0 450.0 1085.5 452.6C1089.1 455.2 1092.6 457.8 1096.2 460.4C1099.7 463.0 1103.2 465.7 1106.8 468.3C1110.3 471.0 1113.8 473.7 1117.3 476.4C1120.8 479.2 1124.3 481.9 1127.8 484.7C1131.2 487.4 1134.7 490.2 1138.2 493.1C1141.6 495.9 1145.0 498.7 1148.5 501.6C1151.9 504.5 1155.3 507.4 1158.7 510.4C1162.0 513.3 1165.4 516.3 1168.5 519.4C1171.5 522.6 1174.5 525.8 1177.0 529.2C1179.4 532.7 1181.5 536.4 1183.1 540.3C1184.7 544.2 1185.7 548.4 1186.5 552.7C1187.3 557.0 1187.6 561.6 1187.8 566.1C1187.9 570.6 1187.8 575.2 1187.5 579.8C1187.3 584.4 1186.9 589.0 1186.5 593.5C1186.0 597.9 1185.5 602.4 1185.0 606.7C1184.5 611.1 1183.7 617.3 1183.4 619.4M528.6 627.2C530.7 626.3 537.1 623.8 541.3 622.1C545.6 620.4 549.8 618.7 554.1 617.0C558.3 615.4 562.6 613.7 566.9 612.1C571.2 610.5 575.5 608.9 579.8 607.3C584.1 605.8 588.4 604.2 592.7 602.7C597.0 601.2 601.3 599.7 605.6 598.2C609.9 596.7 614.3 595.2 618.6 593.8C623.0 592.3 627.3 590.9 631.7 589.5C636.0 588.1 640.4 586.7 644.7 585.3C649.1 583.9 653.5 582.6 657.8 581.3C662.2 579.9 666.6 578.6 671.0 577.3C675.4 576.1 679.8 574.8 684.2 573.6C688.6 572.3 693.0 571.1 697.4 569.9C701.8 568.7 706.3 567.5 710.7 566.3C715.1 565.2 719.5 564.0 724.0 562.9C728.4 561.8 732.8 560.7 737.3 559.6C741.7 558.5 746.2 557.5 750.7 556.5C755.1 555.4 759.6 554.4 764.0 553.4C768.5 552.4 773.0 551.4 777.5 550.5C781.9 549.5 788.7 548.1 790.9 547.7M563.9 655.4C566.0 654.5 572.2 651.8 576.4 650.0C580.5 648.3 584.7 646.6 588.9 645.0C593.1 643.3 597.4 641.8 601.6 640.2C605.8 638.7 610.1 637.2 614.4 635.7C618.6 634.2 622.9 632.8 627.2 631.4C631.5 630.0 635.8 628.7 640.1 627.4C644.4 626.1 648.8 624.8 653.1 623.5C657.5 622.3 661.8 621.1 666.2 619.9C670.5 618.7 674.9 617.5 679.3 616.3C683.6 615.2 688.0 614.1 692.4 613.0C696.8 611.9 701.2 610.8 705.6 609.7C710.0 608.6 714.4 607.6 718.8 606.5C723.2 605.5 727.6 604.4 732.0 603.4C736.4 602.4 740.8 601.4 745.2 600.4C749.6 599.3 754.1 598.3 758.5 597.3C762.9 596.3 767.3 595.3 771.7 594.3C776.1 593.3 780.5 592.3 784.9 591.2C789.3 590.2 793.7 589.2 798.1 588.2C802.4 587.1 809.0 585.5 811.2 585.0M599.5 683.7C601.6 682.9 608.2 680.3 612.5 678.7C616.9 677.1 621.3 675.5 625.6 673.9C630.0 672.4 634.4 670.8 638.8 669.3C643.2 667.8 647.7 666.3 652.1 664.9C656.5 663.5 661.0 662.0 665.4 660.7C669.9 659.3 674.3 657.9 678.8 656.6C683.3 655.3 687.8 654.0 692.2 652.7C696.7 651.4 701.2 650.1 705.7 648.9C710.2 647.7 714.7 646.5 719.3 645.3C723.8 644.1 728.3 643.0 732.8 641.9C737.4 640.7 741.9 639.6 746.4 638.6C751.0 637.5 755.5 636.4 760.1 635.4C764.6 634.3 769.2 633.3 773.8 632.3C778.3 631.3 782.9 630.3 787.5 629.4C792.0 628.4 796.6 627.5 801.2 626.6C805.8 625.7 810.3 624.8 814.9 623.9C819.5 623.0 824.1 622.1 828.7 621.3C833.2 620.4 837.8 619.6 842.4 618.8C847.0 618.0 851.6 617.2 856.2 616.4C860.8 615.6 867.6 614.4 869.9 614.0M958.3 506.7C960.3 505.8 966.4 502.9 970.4 501.1C974.5 499.2 978.6 497.4 982.7 495.6C986.8 493.8 990.9 492.0 995.0 490.2C999.1 488.5 1003.2 486.7 1007.3 485.0C1011.5 483.3 1015.6 481.6 1019.8 480.0C1023.9 478.3 1028.1 476.7 1032.3 475.1C1036.5 473.4 1040.6 471.9 1044.8 470.3C1049.0 468.7 1053.2 467.2 1057.5 465.7C1061.7 464.2 1065.9 462.7 1070.1 461.2C1074.4 459.8 1078.6 458.3 1082.8 456.9C1087.1 455.5 1091.4 454.1 1095.6 452.8C1099.9 451.4 1104.2 450.1 1108.4 448.8C1112.7 447.5 1117.0 446.2 1121.3 444.9C1125.6 443.7 1129.9 442.4 1134.2 441.2C1138.5 440.0 1142.9 438.8 1147.2 437.7C1151.5 436.5 1155.8 435.4 1160.2 434.3C1164.5 433.2 1168.8 432.1 1173.2 431.0C1177.5 430.0 1181.9 429.0 1186.3 427.9C1190.6 426.9 1195.0 426.0 1199.3 425.0C1203.7 424.1 1208.1 423.1 1212.5 422.2C1216.8 421.3 1223.4 420.1 1225.6 419.6M1008.1 528.8C1010.2 528.0 1016.5 525.4 1020.7 523.8C1024.9 522.1 1029.2 520.5 1033.4 518.8C1037.6 517.2 1041.9 515.6 1046.1 514.0C1050.4 512.4 1054.6 510.9 1058.9 509.3C1063.1 507.8 1067.4 506.2 1071.7 504.7C1076.0 503.2 1080.2 501.7 1084.5 500.2C1088.8 498.7 1093.1 497.3 1097.4 495.8C1101.7 494.4 1106.0 493.0 1110.3 491.5C1114.7 490.1 1119.0 488.7 1123.3 487.4C1127.6 486.0 1132.0 484.6 1136.3 483.3C1140.6 481.9 1145.0 480.6 1149.3 479.3C1153.7 478.0 1158.0 476.7 1162.4 475.4C1166.7 474.1 1171.1 472.9 1175.4 471.6C1179.8 470.4 1184.2 469.1 1188.5 467.9C1192.9 466.7 1197.3 465.5 1201.7 464.3C1206.0 463.1 1210.4 462.0 1214.8 460.8C1219.2 459.6 1223.6 458.5 1228.0 457.4C1232.4 456.3 1236.7 455.1 1241.1 454.0C1245.5 453.0 1249.9 451.9 1254.3 450.8C1258.7 449.7 1265.3 448.2 1267.5 447.6M1026.4 561.3C1028.5 560.5 1034.9 558.0 1039.1 556.3C1043.3 554.7 1047.6 553.0 1051.8 551.4C1056.1 549.7 1060.4 548.1 1064.6 546.5C1068.9 544.9 1073.2 543.3 1077.4 541.7C1081.7 540.1 1086.0 538.6 1090.3 537.0C1094.6 535.5 1098.9 533.9 1103.2 532.4C1107.5 530.9 1111.8 529.3 1116.1 527.8C1120.4 526.3 1124.7 524.9 1129.1 523.4C1133.4 521.9 1137.7 520.5 1142.0 519.1C1146.4 517.6 1150.7 516.2 1155.1 514.8C1159.4 513.4 1163.8 512.0 1168.1 510.7C1172.5 509.3 1176.8 508.0 1181.2 506.7C1185.6 505.3 1189.9 504.0 1194.3 502.8C1198.7 501.5 1203.1 500.2 1207.5 499.0C1211.9 497.8 1216.3 496.6 1220.7 495.4C1225.1 494.2 1229.5 493.0 1233.9 491.9C1238.3 490.7 1242.7 489.6 1247.1 488.5C1251.6 487.4 1256.0 486.3 1260.4 485.3C1264.9 484.2 1269.3 483.2 1273.8 482.2C1278.2 481.2 1282.7 480.2 1287.1 479.3C1291.6 478.3 1298.3 477.0 1300.5 476.5M778.8 525.4L795.0 538.6" fill="none" stroke="#1c1c1c" stroke-width="1.25" stroke-linejoin="round" clip-path="url(#silc)"/>
<path d="M508.1 605.2C512.3 602.5 516.5 601.5 520.7 599.6C524.9 597.7 529.1 595.8 533.3 593.9C537.5 592.0 541.7 590.1 545.9 588.2C550.1 586.3 554.3 584.5 558.5 582.6C562.8 580.8 567.0 578.9 571.2 577.2C575.5 575.4 579.8 573.7 584.0 572.0C588.3 570.3 592.6 568.7 597.0 567.1C601.3 565.6 605.6 564.1 610.0 562.7C614.4 561.2 618.8 559.9 623.2 558.6C627.6 557.3 632.0 556.1 636.5 554.9C640.9 553.7 645.4 552.6 649.8 551.5C654.3 550.4 658.8 549.3 663.3 548.3C667.8 547.2 672.3 546.2 676.8 545.3C681.3 544.3 685.8 543.3 690.3 542.4C694.8 541.4 699.3 540.5 703.9 539.6C708.4 538.7 712.9 537.8 717.4 536.8C721.9 535.9 726.4 535.0 730.9 534.1C735.5 533.2 740.0 532.3 744.5 531.3C749.0 530.4 753.5 529.5 758.0 528.6C762.5 527.7 767.0 526.7 771.5 525.8C776.1 524.8 780.6 523.9 785.1 523.0C789.6 522.0 794.1 521.0 798.6 520.1C803.0 519.1 807.5 518.1 812.0 517.1C816.5 516.1 821.0 515.1 825.5 514.1C830.0 513.0 834.5 512.0 838.9 511.0C843.4 509.9 847.9 508.9 852.4 507.9C856.9 507.0 861.4 506.0 865.9 505.1C870.4 504.2 875.0 503.3 879.5 502.4C884.0 501.6 888.5 500.8 893.0 499.9C897.5 499.0 902.0 498.1 906.5 497.2C911.0 496.3 915.5 495.3 920.0 494.3C924.4 493.2 928.9 492.2 933.3 491.0C937.7 489.8 942.2 488.6 946.6 487.3C950.9 485.9 955.3 484.5 959.7 483.1C964.0 481.6 968.4 480.1 972.7 478.7C977.1 477.2 981.4 475.7 985.8 474.2C990.1 472.7 994.5 471.2 998.9 469.8C1003.2 468.3 1007.6 466.8 1012.0 465.4C1016.3 463.9 1020.7 462.5 1025.0 461.0C1029.4 459.5 1033.8 458.1 1038.2 456.6C1042.5 455.1 1046.9 453.7 1051.3 452.2C1055.6 450.7 1060.0 449.2 1064.4 447.8C1068.7 446.3 1073.1 444.8 1077.5 443.2C1081.8 441.7 1086.2 440.2 1090.5 438.7C1094.9 437.2 1099.3 435.7 1103.6 434.2C1108.0 432.7 1112.4 431.3 1116.8 429.8C1121.2 428.4 1125.6 427.0 1130.0 425.7C1134.4 424.4 1138.8 423.1 1143.2 421.9C1147.6 420.7 1152.1 419.5 1156.6 418.4C1161.0 417.4 1165.5 416.4 1170.0 415.5C1174.5 414.6 1179.0 413.8 1183.6 413.1C1188.1 412.5 1192.7 411.9 1197.2 411.5C1201.8 411.0 1206.4 410.0 1211.1 410.6C1215.8 411.1 1220.8 412.7 1225.7 414.6C1230.6 416.5 1235.1 418.5 1240.3 421.9C1245.5 425.2 1250.9 430.1 1256.7 434.7C1262.5 439.3 1268.9 444.4 1275.0 449.3C1281.1 454.2 1287.2 459.0 1293.3 463.9C1299.4 468.8 1306.4 474.0 1311.6 478.6C1316.8 483.2 1321.1 487.1 1324.3 491.4C1327.5 495.6 1329.3 499.5 1330.7 504.1C1332.1 508.7 1332.4 513.0 1332.6 518.8C1332.8 524.6 1332.8 532.8 1331.7 538.9C1330.6 545.0 1329.0 550.4 1326.2 555.3C1323.5 560.2 1318.9 564.5 1315.2 568.1C1311.5 571.8 1307.6 575.1 1304.2 577.2C1300.8 579.3 1298.4 579.1 1294.6 580.5C1290.9 581.9 1286.0 584.0 1281.6 585.7C1277.3 587.4 1272.9 589.0 1268.6 590.7C1264.2 592.3 1259.9 593.9 1255.5 595.4C1251.2 597.0 1246.8 598.5 1242.4 600.0C1238.1 601.5 1233.7 603.0 1229.3 604.5C1225.0 605.9 1220.6 607.4 1216.2 608.8C1211.8 610.2 1207.4 611.6 1203.1 613.0C1198.7 614.4 1194.3 615.8 1189.9 617.2C1185.5 618.5 1181.1 619.9 1176.7 621.2C1172.3 622.6 1167.9 623.9 1163.5 625.2C1159.1 626.6 1154.7 627.9 1150.3 629.2C1145.9 630.6 1141.5 631.9 1137.1 633.2C1132.7 634.6 1128.3 635.9 1123.9 637.3C1119.5 638.6 1115.0 640.0 1110.6 641.3C1106.2 642.7 1101.8 644.1 1097.4 645.5C1093.0 646.8 1088.5 648.2 1084.1 649.7C1079.7 651.1 1075.3 652.5 1070.8 654.0C1066.4 655.5 1062.0 657.0 1057.6 658.5C1053.2 660.0 1048.8 661.6 1044.5 663.2C1040.1 664.9 1035.8 666.5 1031.5 668.3C1027.2 670.0 1023.0 671.9 1018.8 673.8C1014.6 675.7 1010.4 677.6 1006.3 679.7C1002.2 681.8 998.2 684.0 994.2 686.3C990.2 688.6 986.3 690.9 982.5 693.5C978.7 696.0 975.0 698.6 971.3 701.4C967.7 704.1 964.2 707.1 960.7 710.1C957.3 713.1 954.0 716.4 950.6 719.5C947.2 722.5 943.8 725.7 940.2 728.5C936.6 731.4 932.9 734.0 929.1 736.5C925.3 739.0 921.3 741.4 917.3 743.6C913.3 745.8 909.2 747.9 905.0 749.9C900.9 751.9 896.7 753.8 892.5 755.6C888.2 757.4 884.0 759.2 879.7 760.8C875.4 762.5 871.0 764.1 866.7 765.7C862.3 767.3 858.0 768.8 853.6 770.3C849.2 771.7 844.8 773.2 840.4 774.6C835.9 776.0 831.5 777.3 827.1 778.7C822.7 780.1 818.2 781.4 813.8 782.7C809.3 784.0 804.9 785.3 800.5 786.6C796.0 787.9 791.6 789.2 787.1 790.4C782.7 791.7 778.2 792.9 773.8 794.1C769.3 795.3 764.8 796.5 760.4 797.6C755.9 798.8 751.4 799.9 746.9 801.0C742.4 802.0 738.0 803.1 733.5 804.1C729.0 805.1 724.5 806.1 719.9 807.0C715.4 808.0 710.9 808.9 706.4 809.7C701.9 810.6 697.3 811.4 692.8 812.1C688.2 812.9 683.7 813.6 679.1 814.3C674.5 815.0 669.9 815.6 665.4 816.1C660.8 816.7 656.2 817.2 651.5 817.7C646.9 818.1 643.4 819.1 637.7 818.9C632.0 818.6 623.7 817.9 617.4 816.2C611.1 814.5 606.0 812.0 599.6 808.6C593.2 805.2 586.9 801.0 579.3 795.9C571.7 790.8 562.4 784.5 553.9 778.1C545.4 771.8 537.0 764.8 528.5 757.8C520.0 750.8 509.9 742.1 503.1 736.2C496.3 730.3 491.9 726.7 487.9 722.2C483.9 717.8 481.1 713.7 479.0 709.5C476.9 705.3 475.8 702.3 475.2 696.8C474.6 691.3 475.0 683.7 475.2 676.5C475.4 669.3 475.1 661.2 476.4 653.6C477.7 646.0 479.6 637.1 482.8 630.8C486.0 624.5 491.3 619.9 495.5 615.6C499.7 611.3 503.9 607.9 508.1 605.2Z" fill="none" stroke="#333" stroke-width="1.4"/>
<path d="M803.5 550.4C803.2 546.3 804.7 541.9 806.9 538.3C809.2 534.6 813.0 531.1 816.9 528.3C820.7 525.5 825.5 523.3 830.0 521.4C834.5 519.4 839.3 517.8 843.9 516.3C848.5 514.9 853.1 513.7 857.7 512.7C862.3 511.7 866.9 510.9 871.5 510.2C876.1 509.5 880.8 509.0 885.4 508.6C890.1 508.2 894.8 508.0 899.5 507.7C904.2 507.5 909.0 507.4 913.8 507.3C918.6 507.3 923.4 507.2 928.3 507.3C933.1 507.4 938.0 507.6 942.8 508.0C947.6 508.5 952.4 509.0 957.0 510.0C961.7 511.0 966.3 512.1 970.7 513.8C975.1 515.4 979.5 517.3 983.6 519.8C987.6 522.2 991.7 525.2 995.3 528.5C998.8 531.9 1002.4 535.9 1004.9 539.8C1007.5 543.8 1009.8 548.3 1010.8 552.5C1011.8 556.8 1012.0 561.2 1011.1 565.4C1010.1 569.5 1007.8 573.6 1005.1 577.3C1002.3 581.0 998.5 584.5 994.6 587.6C990.8 590.7 986.3 593.4 981.9 595.7C977.6 597.9 973.0 599.7 968.5 601.1C963.9 602.6 959.2 603.6 954.6 604.4C949.9 605.2 945.1 605.6 940.4 605.9C935.6 606.2 930.9 606.1 926.1 606.0C921.3 605.9 916.6 605.6 911.9 605.3C907.1 604.9 902.4 604.5 897.8 603.9C893.1 603.4 888.5 602.7 883.8 601.9C879.2 601.0 874.7 600.1 870.1 598.9C865.6 597.7 861.0 596.4 856.6 594.9C852.1 593.3 847.6 591.6 843.2 589.5C838.8 587.5 834.3 585.3 830.1 582.8C826.0 580.2 821.8 577.4 818.2 574.1C814.6 570.8 810.9 567.0 808.5 563.1C806.0 559.2 803.7 554.6 803.5 550.4Z" fill="#a2a2a2"/>
<path d="M907.8 546.5C909.5 542.7 914.9 531.1 918.2 524.2C921.4 517.2 925.6 508.1 927.1 504.9M907.8 546.5C916.2 544.2 944.4 536.4 958.3 533.1C972.1 529.7 985.5 527.5 991.0 526.4M907.8 546.5C916.2 547.7 941.3 550.8 958.3 553.9C975.2 557.0 1001.0 563.2 1009.5 565.0M907.8 546.5C913.7 551.4 933.3 565.8 943.4 576.2C953.6 586.6 964.5 603.4 968.7 608.9M907.8 546.5C905.3 551.9 896.9 568.5 892.9 579.1C888.9 589.8 885.5 605.1 884.0 610.3M907.8 546.5C898.9 549.4 869.3 558.7 854.3 564.3C839.3 569.9 824.0 577.3 817.9 579.9M907.8 546.5C896.4 545.2 856.5 540.1 839.4 539.0C822.3 537.9 811.0 539.6 805.3 539.8M907.8 546.5C904.3 543.6 893.8 534.8 887.0 529.4C880.2 523.9 870.3 516.4 866.9 513.8M840.9 524.2L895.9 508.6L956.1 514.5L987.3 543.5L974.6 571.0L922.6 588.1L861.0 579.1L829.0 552.4ZM840.9 524.2L829.0 521.9M895.9 508.6L895.1 504.9M956.1 514.5L966.5 509.3M987.3 543.5L1010.3 547.2M974.6 571.0L992.4 586.6M922.6 588.1L924.9 605.6M861.0 579.1L847.6 594.7M829.0 552.4L806.0 559.8" fill="none" stroke="#161616" stroke-width="1.2" stroke-linejoin="round"/>
<path d="M803.5 550.4C803.2 546.3 804.7 541.9 806.9 538.3C809.2 534.6 813.0 531.1 816.9 528.3C820.7 525.5 825.5 523.3 830.0 521.4C834.5 519.4 839.3 517.8 843.9 516.3C848.5 514.9 853.1 513.7 857.7 512.7C862.3 511.7 866.9 510.9 871.5 510.2C876.1 509.5 880.8 509.0 885.4 508.6C890.1 508.2 894.8 508.0 899.5 507.7C904.2 507.5 909.0 507.4 913.8 507.3C918.6 507.3 923.4 507.2 928.3 507.3C933.1 507.4 938.0 507.6 942.8 508.0C947.6 508.5 952.4 509.0 957.0 510.0C961.7 511.0 966.3 512.1 970.7 513.8C975.1 515.4 979.5 517.3 983.6 519.8C987.6 522.2 991.7 525.2 995.3 528.5C998.8 531.9 1002.4 535.9 1004.9 539.8C1007.5 543.8 1009.8 548.3 1010.8 552.5C1011.8 556.8 1012.0 561.2 1011.1 565.4C1010.1 569.5 1007.8 573.6 1005.1 577.3C1002.3 581.0 998.5 584.5 994.6 587.6C990.8 590.7 986.3 593.4 981.9 595.7C977.6 597.9 973.0 599.7 968.5 601.1C963.9 602.6 959.2 603.6 954.6 604.4C949.9 605.2 945.1 605.6 940.4 605.9C935.6 606.2 930.9 606.1 926.1 606.0C921.3 605.9 916.6 605.6 911.9 605.3C907.1 604.9 902.4 604.5 897.8 603.9C893.1 603.4 888.5 602.7 883.8 601.9C879.2 601.0 874.7 600.1 870.1 598.9C865.6 597.7 861.0 596.4 856.6 594.9C852.1 593.3 847.6 591.6 843.2 589.5C838.8 587.5 834.3 585.3 830.1 582.8C826.0 580.2 821.8 577.4 818.2 574.1C814.6 570.8 810.9 567.0 808.5 563.1C806.0 559.2 803.7 554.6 803.5 550.4Z" fill="none" stroke="#1c2a3a" stroke-width="1.4"/>
<path d="M790.2 553.5C789.6 549.1 790.6 544.1 792.4 540.0C794.3 535.8 797.7 531.7 801.2 528.5C804.7 525.2 809.2 522.7 813.6 520.4C818.0 518.1 823.0 516.4 827.7 514.8C832.5 513.2 837.3 511.9 842.0 510.8C846.8 509.6 851.5 508.7 856.2 507.9C861.0 507.1 865.7 506.5 870.5 506.0C875.2 505.4 880.0 505.0 884.8 504.7C889.7 504.3 894.5 504.0 899.4 503.7C904.3 503.4 909.2 503.1 914.2 503.0C919.1 502.8 924.1 502.6 929.0 502.7C934.0 502.8 938.9 502.9 943.8 503.3C948.7 503.7 953.6 504.3 958.4 505.2C963.1 506.1 967.9 507.2 972.5 508.7C977.1 510.2 981.6 512.0 986.0 514.3C990.4 516.5 994.7 519.2 998.7 522.2C1002.7 525.3 1006.8 528.8 1010.1 532.5C1013.5 536.3 1016.6 540.4 1018.9 544.6C1021.2 548.8 1023.0 553.3 1023.8 557.7C1024.6 562.1 1024.4 566.6 1023.5 571.0C1022.7 575.3 1020.8 579.7 1018.5 583.8C1016.1 588.0 1013.0 592.0 1009.6 595.7C1006.2 599.4 1002.2 602.9 998.1 605.9C994.0 608.9 989.5 611.6 985.1 613.9C980.6 616.1 976.0 617.8 971.3 619.2C966.7 620.6 961.9 621.6 957.1 622.3C952.3 623.0 947.4 623.3 942.6 623.4C937.7 623.6 932.8 623.4 927.9 623.0C923.0 622.7 918.0 622.1 913.2 621.5C908.3 620.8 903.4 620.0 898.6 619.1C893.8 618.2 889.1 617.2 884.4 616.1C879.6 614.9 875.0 613.7 870.4 612.3C865.7 610.9 861.2 609.3 856.7 607.6C852.2 605.9 847.7 604.0 843.3 601.9C838.9 599.8 834.6 597.6 830.3 595.1C826.1 592.6 821.8 590.0 817.7 587.1C813.7 584.2 809.6 581.1 806.0 577.7C802.4 574.2 798.7 570.5 796.1 566.4C793.4 562.4 790.8 557.9 790.2 553.5Z" fill="none" stroke="#f0a63a" stroke-width="2.6"/>
<path d="M795.0 553.4C794.5 549.2 795.5 544.6 797.3 540.8C799.1 536.9 802.3 533.1 805.7 530.1C809.1 527.0 813.5 524.5 817.8 522.3C822.1 520.0 826.9 518.3 831.5 516.7C836.0 515.1 840.6 513.8 845.2 512.6C849.8 511.4 854.3 510.5 858.8 509.6C863.3 508.8 867.9 508.2 872.4 507.6C877.0 507.0 881.5 506.6 886.1 506.2C890.7 505.8 895.4 505.4 900.0 505.1C904.7 504.8 909.5 504.5 914.3 504.4C919.0 504.2 923.9 504.1 928.6 504.1C933.4 504.2 938.2 504.4 942.9 504.8C947.7 505.2 952.4 505.8 957.0 506.7C961.6 507.6 966.1 508.7 970.5 510.2C975.0 511.6 979.3 513.4 983.5 515.6C987.6 517.8 991.8 520.3 995.6 523.3C999.4 526.2 1003.1 529.7 1006.3 533.3C1009.4 536.9 1012.4 540.9 1014.5 545.0C1016.6 549.0 1018.3 553.3 1019.0 557.6C1019.7 561.8 1019.6 566.2 1018.7 570.5C1017.8 574.7 1016.0 578.9 1013.7 582.9C1011.5 586.9 1008.5 590.8 1005.2 594.4C1002.0 597.9 998.1 601.3 994.2 604.2C990.3 607.2 986.0 609.8 981.7 611.9C977.4 614.1 973.0 615.8 968.5 617.1C964.0 618.5 959.4 619.5 954.8 620.2C950.2 620.9 945.5 621.2 940.8 621.4C936.1 621.5 931.4 621.4 926.7 621.1C922.0 620.8 917.2 620.2 912.6 619.6C907.9 619.0 903.3 618.2 898.7 617.3C894.1 616.4 889.6 615.5 885.1 614.3C880.6 613.2 876.1 611.9 871.7 610.5C867.3 609.1 863.0 607.6 858.7 605.9C854.3 604.1 850.1 602.3 845.8 600.2C841.6 598.2 837.4 596.0 833.3 593.6C829.1 591.1 824.9 588.6 821.0 585.7C817.0 582.9 813.0 579.9 809.6 576.6C806.1 573.3 802.6 569.6 800.2 565.8C797.8 561.9 795.5 557.5 795.0 553.4Z" fill="none" stroke="#f0a63a" stroke-width="1.7"/>
<path d="M895.9 619.0C897.6 619.3 900.8 620.1 906.3 620.7C911.7 621.4 921.1 622.5 928.6 622.7C936.0 622.9 943.4 622.8 950.9 621.9C958.3 621.1 969.4 618.2 973.1 617.5" fill="none" stroke="#6db33f" stroke-width="3"/>
<circle cx="935.9" cy="616.3" r="5.6" fill="#fff" stroke="#3d4f66" stroke-width="1.4"/>
</g><g transform="translate(1500 140) scale(0.20309)" stroke-linecap="round">
<g fill="none" stroke="#c4c4c4" stroke-width="5"><path d="M600 400L870 330L1040 455L770 530ZM600 400V660L770 800L1040 730V455M770 530V800"/><path d="M870 330V590M600 660L870 590L1040 730" stroke="#d6d6d6"/></g>
<path d="M870 325V480" stroke="#8a8a8a" stroke-width="14"/>
<path d="M605 668L730 625" stroke="#777" stroke-width="13"/>
<path d="M935 640L1030 720" stroke="#555" stroke-width="11"/>
<path d="M850 410L905 415L942 470L936 560L858 545Z" fill="#c3d0d8"/>
<path d="M850 410L858 545L800 560L812 440Z" fill="#aebcc6"/>
<path d="M716 572L858 522L942 556L800 612Z" fill="#b9cad4"/>
<path d="M716 572L800 612V628L716 588Z" fill="#8fa3b0"/><path d="M800 612L942 556V572L800 628Z" fill="#a4b6c2"/>
<g stroke="#4f6475" stroke-width="17"><path d="M721 595V682"/><path d="M795 625V738"/><path d="M906 585V705"/></g><path d="M836 610V648" stroke="#5d7283" stroke-width="14"/>
<path d="M735 497L830 482" stroke="#4f6475" stroke-width="20"/><path d="M815 572L938 546" stroke="#4f6475" stroke-width="20"/>
<path d="M462 528L432 552L462 578" fill="none" stroke="#111" stroke-width="9" stroke-linejoin="round"/>
</g>
<g font-family="Liberation Sans,sans-serif" font-size="15" fill="#111" text-anchor="middle"><text x="1676.700" y="196">Z</text><text x="1611.300" y="282.500">X</text><text x="1717.300" y="294.500">Y</text></g>
</g></svg><div class="abs" style="left:11px;top:181px;width:261px;height:722px;background:#eeeeee;border-right:1px solid #d2d2d2;border-bottom:1.500px solid #b8b8b8;box-shadow:0 1px 2px rgba(0,0,0,0.2)"></div>
<div class="abs" style="left:11px;top:180px;width:261px;height:3px;background:linear-gradient(#d8d8d8,#bdbdbd 60%,#e6e6e6)"></div>
<div class="abs" style="left:11px;top:183px;width:260px;height:17px;background:#f0f0f0"></div>
<svg class="abs" style="left:257px;top:187px" width="12" height="14" viewBox="0 0 12 14"><path d="M8 2.500l-4 4.500 4 4.500" fill="none" stroke="#555" stroke-width="1.400"/></svg>
<div class="abs" style="left:44px;top:200px;width:227px;height:21.500px;background:linear-gradient(#d9d9d9,#d0d0d0 70%,#c6c6c6)"></div>
<div class="abs" style="left:11px;top:200px;width:33px;height:22px;background:#f2f2f2"></div>
<svg class="abs" style="left:17px;top:202px" width="22" height="20" viewBox="0 0 22 20"><g fill="none" stroke="#333" stroke-width="1.200"><rect x="3" y="2.500" width="3.500" height="3.500"/><rect x="7" y="8.500" width="3.500" height="3.500"/><rect x="7" y="14" width="3.500" height="3.500"/><path d="M4.800 6v9.800h2.200M4.800 10.200h2.200M8.500 4.200h9M12.500 10.200h6M12.500 15.800h6" stroke-width="1.400"/></g></svg>
<div class="t" style="letter-spacing:-0.105px;left:20.5px;top:227.6px;font-size:11px;color:#6e6e6e;font-weight:bold">Design Manager</div>
<div class="abs" style="left:11px;top:244px;width:260px;height:1.500px;background:#cfcfcf"></div>
<div class="abs" style="left:11px;top:897px;width:260px;height:5px;background:#f5f5f5"></div>
<div class="abs" style="left:44px;top:630px;width:224px;height:218.500px;background:#fff"></div>
<div class="abs" style="left:67px;top:802px;width:201px;height:23px;background:#b3d8ea"></div>
<svg class="abs" style="left:0;top:180px" width="280" height="730" viewBox="0 180 280 730"><path d="M27.5 254.5h9l-4.500 6z" fill="#555"/><g stroke="#1f3f55" stroke-width="1" stroke-linejoin="round"><path d="M49.5 252.0l7-3 6 2.500v11l-6.500 3.500-6.500-3z" fill="#eaf3f8"/><path d="M49.5 252.0l6.500 2.500 6.500-3M56.0 254.5v11.500" fill="none"/><path d="M50.5 250.5l3.500-1.500 3 1.200v4l-3.200 1.800-3.300-1.500z" fill="#3b9ad0"/><path d="M57.0 255.0l3-1.300 2.500 1v3.500l-2.700 1.500-2.800-1.300z" fill="#3b9ad0"/></g><ellipse cx="59.5" cy="262.8" rx="6" ry="4.600" fill="#d3202a" stroke="#a01018" stroke-width="0.500"/><text x="59.5" y="264.8" font-family="Liberation Sans,sans-serif" font-size="5.600" font-weight="bold" fill="#fff" text-anchor="middle">SW</text><g stroke="#b8b8b8" stroke-width="0.900" fill="none"><path d="M52.0 278.0l4-3 5 1-4 3zM56.0 276.0v-3M60.0 277.0h-3"/><path d="M85.0 274.0h7v5h-7zM92.0 274.0l2 1.500v5l-2-1.500"/><path d="M117.5 274.5l3-1.500v7l-3 1.500zM122.5 273.5l3-1.500v7l-3 1.500z"/></g><path d="M52.9 306.1v8.400l6.200-4.200z" fill="#3d86b8"/><path d="M52.9 330.1v8.400l6.200-4.200z" fill="#b0b0b0"/><g stroke="#5a5a5a" stroke-width="1" stroke-linejoin="round"><path d="M74.0 330.8q0-4 4-5l4 1.500v5l3 1.500v6l-5 2.500-6-3z" fill="#cfcfcf"/><path d="M74.0 331.3l4 1.800v9" fill="none"/></g><ellipse cx="83.0" cy="339.6" rx="6" ry="4.600" fill="#d3202a" stroke="#a01018" stroke-width="0.500"/><text x="83.0" y="341.6" font-family="Liberation Sans,sans-serif" font-size="5.600" font-weight="bold" fill="#fff" text-anchor="middle">SW</text><path d="M52.9 353.6v8.400l6.200-4.200z" fill="#b0b0b0"/><g stroke="#1f3f55" stroke-width="1" stroke-linejoin="round"><path d="M73.0 352.3l7-3 6 2.500v11l-6.500 3.500-6.500-3z" fill="#eaf3f8"/><path d="M73.0 352.3l6.500 2.500 6.500-3M79.5 354.8v11.500" fill="none"/><path d="M74.0 350.8l3.500-1.500 3 1.200v4l-3.200 1.800-3.300-1.500z" fill="#3b9ad0"/><path d="M80.5 355.3l3-1.300 2.500 1v3.500l-2.700 1.500-2.800-1.300z" fill="#3b9ad0"/></g><ellipse cx="83.0" cy="363.1" rx="6" ry="4.600" fill="#d3202a" stroke="#a01018" stroke-width="0.500"/><text x="83.0" y="365.1" font-family="Liberation Sans,sans-serif" font-size="5.600" font-weight="bold" fill="#fff" text-anchor="middle">SW</text><path d="M52.9 377.1v8.400l6.200-4.200z" fill="#b0b0b0"/><g stroke="#1f3f55" stroke-width="1" stroke-linejoin="round"><path d="M73.0 375.8l7-3 6 2.500v11l-6.500 3.500-6.500-3z" fill="#eaf3f8"/><path d="M73.0 375.8l6.500 2.500 6.500-3M79.5 378.3v11.500" fill="none"/><path d="M74.0 374.3l3.500-1.500 3 1.200v4l-3.200 1.800-3.300-1.500z" fill="#3b9ad0"/><path d="M80.5 378.8l3-1.300 2.500 1v3.500l-2.700 1.500-2.800-1.300z" fill="#3b9ad0"/></g><ellipse cx="83.0" cy="386.6" rx="6" ry="4.600" fill="#d3202a" stroke="#a01018" stroke-width="0.500"/><text x="83.0" y="388.6" font-family="Liberation Sans,sans-serif" font-size="5.600" font-weight="bold" fill="#fff" text-anchor="middle">SW</text><path d="M52.9 400.8v8.400l6.200-4.200z" fill="#b0b0b0"/><g stroke="#5a5a5a" stroke-width="1" stroke-linejoin="round"><path d="M74.0 401.5q0-4 4-5l4 1.500v5l3 1.500v6l-5 2.500-6-3z" fill="#cfcfcf"/><path d="M74.0 402.0l4 1.800v9" fill="none"/></g><ellipse cx="83.0" cy="410.3" rx="6" ry="4.600" fill="#d3202a" stroke="#a01018" stroke-width="0.500"/><text x="83.0" y="412.3" font-family="Liberation Sans,sans-serif" font-size="5.600" font-weight="bold" fill="#fff" text-anchor="middle">SW</text><path d="M52.9 424.5v8.400l6.200-4.200z" fill="#b0b0b0"/><g stroke="#5a5a5a" stroke-width="1" stroke-linejoin="round"><path d="M74.0 425.2q0-4 4-5l4 1.500v5l3 1.500v6l-5 2.500-6-3z" fill="#cfcfcf"/><path d="M74.0 425.7l4 1.800v9" fill="none"/></g><ellipse cx="83.0" cy="434.0" rx="6" ry="4.600" fill="#d3202a" stroke="#a01018" stroke-width="0.500"/><text x="83.0" y="436.0" font-family="Liberation Sans,sans-serif" font-size="5.600" font-weight="bold" fill="#fff" text-anchor="middle">SW</text><path d="M52.9 448.2v8.400l6.200-4.200z" fill="#b0b0b0"/><g stroke="#5a5a5a" stroke-width="1" stroke-linejoin="round"><path d="M74.0 448.9q0-4 4-5l4 1.500v5l3 1.500v6l-5 2.500-6-3z" fill="#cfcfcf"/><path d="M74.0 449.4l4 1.800v9" fill="none"/></g><ellipse cx="83.0" cy="457.7" rx="6" ry="4.600" fill="#d3202a" stroke="#a01018" stroke-width="0.500"/><text x="83.0" y="459.7" font-family="Liberation Sans,sans-serif" font-size="5.600" font-weight="bold" fill="#fff" text-anchor="middle">SW</text><path d="M52.9 471.9v8.400l6.200-4.200z" fill="#b0b0b0"/><g stroke="#5a5a5a" stroke-width="1" stroke-linejoin="round"><path d="M74.0 472.6q0-4 4-5l4 1.500v5l3 1.500v6l-5 2.500-6-3z" fill="#cfcfcf"/><path d="M74.0 473.1l4 1.800v9" fill="none"/></g><ellipse cx="83.0" cy="481.4" rx="6" ry="4.600" fill="#d3202a" stroke="#a01018" stroke-width="0.500"/><text x="83.0" y="483.4" font-family="Liberation Sans,sans-serif" font-size="5.600" font-weight="bold" fill="#fff" text-anchor="middle">SW</text><path d="M52.9 495.6v8.400l6.200-4.200z" fill="#b0b0b0"/><g stroke="#5a5a5a" stroke-width="1" stroke-linejoin="round"><path d="M74.0 496.3q0-4 4-5l4 1.500v5l3 1.500v6l-5 2.500-6-3z" fill="#cfcfcf"/><path d="M74.0 496.8l4 1.800v9" fill="none"/></g><ellipse cx="83.0" cy="505.1" rx="6" ry="4.600" fill="#d3202a" stroke="#a01018" stroke-width="0.500"/><text x="83.0" y="507.1" font-family="Liberation Sans,sans-serif" font-size="5.600" font-weight="bold" fill="#fff" text-anchor="middle">SW</text><path d="M52.9 519.3v8.400l6.200-4.200z" fill="#b0b0b0"/><g stroke="#5a5a5a" stroke-width="1" stroke-linejoin="round"><path d="M74.0 520.0q0-4 4-5l4 1.500v5l3 1.500v6l-5 2.500-6-3z" fill="#cfcfcf"/><path d="M74.0 520.5l4 1.800v9" fill="none"/></g><ellipse cx="83.0" cy="528.8" rx="6" ry="4.600" fill="#d3202a" stroke="#a01018" stroke-width="0.500"/><text x="83.0" y="530.8" font-family="Liberation Sans,sans-serif" font-size="5.600" font-weight="bold" fill="#fff" text-anchor="middle">SW</text><path d="M52.9 543.0v8.400l6.200-4.200z" fill="#b0b0b0"/><g stroke="#5a5a5a" stroke-width="1" stroke-linejoin="round"><path d="M74.0 543.7q0-4 4-5l4 1.500v5l3 1.500v6l-5 2.500-6-3z" fill="#cfcfcf"/><path d="M74.0 544.2l4 1.800v9" fill="none"/></g><ellipse cx="83.0" cy="552.5" rx="6" ry="4.600" fill="#d3202a" stroke="#a01018" stroke-width="0.500"/><text x="83.0" y="554.5" font-family="Liberation Sans,sans-serif" font-size="5.600" font-weight="bold" fill="#fff" text-anchor="middle">SW</text><path d="M52.9 566.7v8.400l6.200-4.200z" fill="#b0b0b0"/><g stroke="#5a5a5a" stroke-width="1" stroke-linejoin="round"><path d="M74.0 567.4q0-4 4-5l4 1.500v5l3 1.500v6l-5 2.500-6-3z" fill="#cfcfcf"/><path d="M74.0 567.9l4 1.800v9" fill="none"/></g><ellipse cx="83.0" cy="576.2" rx="6" ry="4.600" fill="#d3202a" stroke="#a01018" stroke-width="0.500"/><text x="83.0" y="578.2" font-family="Liberation Sans,sans-serif" font-size="5.600" font-weight="bold" fill="#fff" text-anchor="middle">SW</text><path d="M52.9 590.4v8.400l6.200-4.200z" fill="#b0b0b0"/><g stroke="#5a5a5a" stroke-width="1" stroke-linejoin="round"><path d="M74.0 591.1q0-4 4-5l4 1.500v5l3 1.500v6l-5 2.500-6-3z" fill="#cfcfcf"/><path d="M74.0 591.6l4 1.800v9" fill="none"/></g><ellipse cx="83.0" cy="599.9" rx="6" ry="4.600" fill="#d3202a" stroke="#a01018" stroke-width="0.500"/><text x="83.0" y="601.9" font-family="Liberation Sans,sans-serif" font-size="5.600" font-weight="bold" fill="#fff" text-anchor="middle">SW</text><path d="M52.9 614.1v8.400l6.200-4.200z" fill="#b0b0b0"/><g stroke="#5a5a5a" stroke-width="1" stroke-linejoin="round"><path d="M74.0 614.8q0-4 4-5l4 1.500v5l3 1.500v6l-5 2.500-6-3z" fill="#cfcfcf"/><path d="M74.0 615.3l4 1.800v9" fill="none"/></g><ellipse cx="83.0" cy="623.6" rx="6" ry="4.600" fill="#d3202a" stroke="#a01018" stroke-width="0.500"/><text x="83.0" y="625.6" font-family="Liberation Sans,sans-serif" font-size="5.600" font-weight="bold" fill="#fff" text-anchor="middle">SW</text><path d="M51.5 639.5h9l-4.500 6z" fill="#555"/><g stroke="#1d4a68" stroke-width="1.300" stroke-linejoin="round"><path d="M72.5 637.5l7-3 7 3v9l-7 4-7-4z" fill="#e8f3fa"/><path d="M72.5 637.5l7 3 7-3M79.5 640.5v10" fill="none"/><path d="M76.0 641.0l3.500-1.500 3.500 1.500v4l-3.500 2-3.500-2z" fill="#4aa3d6"/></g><g stroke="#b8b8b8" stroke-width="0.900" fill="none"><path d="M75.0 662.0l4-3 5 1-4 3zM79.0 660.0v-3M83.0 661.0h-3"/><path d="M108.0 658.0h7v5h-7zM115.0 658.0l2 1.500v5l-2-1.500"/><path d="M140.5 658.5l3-1.500v7l-3 1.500zM145.5 657.5l3-1.500v7l-3 1.500z"/></g><path d="M76.7 690.8v8.400l6.200-4.200z" fill="#3d86b8"/><path d="M79 707V809" stroke="#2f74a8" stroke-width="1.400"/><path d="M79 819V839" stroke="#9a9a9a" stroke-width="1"/><g stroke="#1f3c4a" stroke-width="1.500" stroke-linejoin="round" fill="none"><path d="M95.0 713.5l6 -1.500 8.500 3.500-4.500 4-3.500 8-3.500-6z" fill="#e9f0f3"/><path d="M98.0 719.0l3.500 2 3 4M105.0 721.5l-5.500 .5"/></g><g stroke="#1f3c4a" stroke-width="1.500" stroke-linejoin="round" fill="none"><path d="M95.0 737.3l6 -1.500 8.500 3.500-4.500 4-3.500 8-3.500-6z" fill="#e9f0f3"/><path d="M98.0 742.8l3.500 2 3 4M105.0 745.3l-5.500 .5"/></g><g stroke="#222" stroke-width="1.200" stroke-linejoin="round" fill="#f4f4f4"><path d="M94.5 758.3q3.500 1.500 6.500 0l1 2-1 2 1 2-1 2 1 2-1 2 .5 3.500q-3.500-1.200-7 0q1.500-8 0-15.500z"/><path d="M110.5 758.3q-3 1.500-6.500 0l-1.200 2 1.200 2-1.200 2 1.200 2-1.200 2 1.200 2-.2 3.500q3.500-1.200 7 0q-1.500-8-.3-15.500z"/></g><path d="M102.5 760.3v13" stroke="#3b8fc4" stroke-width="1.200" stroke-dasharray="2 1.500"/><g stroke="#222" stroke-width="1.200" stroke-linejoin="round" fill="#f4f4f4"><path d="M94.5 782.0q3.500 1.500 6.500 0l1 2-1 2 1 2-1 2 1 2-1 2 .5 3.500q-3.500-1.200-7 0q1.500-8 0-15.500z"/><path d="M110.5 782.0q-3 1.500-6.500 0l-1.200 2 1.200 2-1.200 2 1.200 2-1.200 2 1.200 2-.2 3.500q3.500-1.200 7 0q-1.500-8-.3-15.500z"/></g><path d="M102.5 784.0v13" stroke="#3b8fc4" stroke-width="1.200" stroke-dasharray="2 1.500"/><g stroke="#163a55" stroke-width="1.200" stroke-linejoin="round"><path d="M101.0 808.2l5-2 5 2v7l-5 2.500-5-2.500z" fill="#3f95cb"/><path d="M101.0 808.2l5 2 5-2M106.0 810.2v7" fill="none"/><path d="M95.0 812.2l5-2 5 2v7l-5 2.500-5-2.500z" fill="#5fb0de"/><path d="M95.0 812.2l5 2 5-2M100.0 814.2v7" fill="none"/></g><circle cx="79" cy="814" r="3.800" fill="#cfe6f2" stroke="#2e7fb6" stroke-width="1.300"/><g opacity="0.45" stroke="#3a4f5c" stroke-width="1.100" stroke-linejoin="round"><path d="M95.5 833.0l6-2.500 8 2v9l-7 3.500-7-3z" fill="#f2f2f2"/><path d="M101.5 835.0q3-3.500 8.500-2.500v3.500q-5-1-8.500 2.500z" fill="#7fc0e4"/><path d="M95.5 833.0l7 3v9" fill="none"/></g><circle cx="250.700" cy="808" r="1.100" fill="#5b7b8f"/><circle cx="250.700" cy="813.500" r="1.100" fill="#5b7b8f"/><circle cx="250.700" cy="819" r="1.100" fill="#5b7b8f"/></svg>
<div class="t" style="letter-spacing:-0.029px;left:70.0px;top:252.0px;font-size:11px;color:#3a3a3a;">Remote Control Assembly</div>
<div class="t" style="left:46.0px;top:286px;font-size:8.500px;color:#6a6a6a;width:20px;text-align:center">xy</div>
<div class="t" style="left:79.0px;top:286px;font-size:8.500px;color:#6a6a6a;width:20px;text-align:center">yz</div>
<div class="t" style="left:111.5px;top:286px;font-size:8.500px;color:#6a6a6a;width:20px;text-align:center">zx</div>
<div class="t" style="letter-spacing:-0.093px;left:70.0px;top:305.0px;font-size:11px;color:#3d86b8;">Reference Elements</div>
<div class="t" style="letter-spacing:-0.028px;left:93.4px;top:329.1px;font-size:11px;color:#3a3a3a;">Remote Control Button Membra...</div>
<div class="t" style="letter-spacing:-0.079px;left:93.4px;top:352.6px;font-size:11px;color:#3a3a3a;">Battery Holder</div>
<div class="t" style="letter-spacing:-0.031px;left:93.4px;top:376.1px;font-size:11px;color:#3a3a3a;">PCB Board Assembly</div>
<div class="t" style="letter-spacing:0.023px;left:93.4px;top:399.8px;font-size:11px;color:#3a3a3a;">pan cross head_am_B18.6.7M - ...</div>
<div class="t" style="letter-spacing:0.023px;left:93.4px;top:423.5px;font-size:11px;color:#3a3a3a;">pan cross head_am_B18.6.7M - ...</div>
<div class="t" style="letter-spacing:0.023px;left:93.4px;top:447.2px;font-size:11px;color:#3a3a3a;">pan cross head_am_B18.6.7M - ...</div>
<div class="t" style="letter-spacing:0.023px;left:93.4px;top:470.9px;font-size:11px;color:#3a3a3a;">pan cross head_am_B18.6.7M - ...</div>
<div class="t" style="letter-spacing:0.023px;left:93.4px;top:494.6px;font-size:11px;color:#3a3a3a;">pan cross head_am_B18.6.7M - ...</div>
<div class="t" style="letter-spacing:0.023px;left:93.4px;top:518.3px;font-size:11px;color:#3a3a3a;">pan cross head_am_B18.6.7M - ...</div>
<div class="t" style="letter-spacing:0.023px;left:93.4px;top:542.0px;font-size:11px;color:#3a3a3a;">pan cross head_am_B18.6.7M - ...</div>
<div class="t" style="letter-spacing:0.023px;left:93.4px;top:565.7px;font-size:11px;color:#3a3a3a;">pan cross head_am_B18.6.7M - ...</div>
<div class="t" style="letter-spacing:0.023px;left:93.4px;top:589.4px;font-size:11px;color:#3a3a3a;">pan cross head_am_B18.6.7M - ...</div>
<div class="t" style="letter-spacing:0.023px;left:93.4px;top:613.1px;font-size:11px;color:#3a3a3a;">pan cross head_am_B18.6.7M - ...</div>
<div class="t" style="letter-spacing:0.023px;left:93.2px;top:637.0px;font-size:11px;color:#333;font-weight:bold">Remote Control Body (Remote...</div>
<div class="t" style="left:69.0px;top:670.500px;font-size:8.500px;color:#6a6a6a;width:20px;text-align:center">xy</div>
<div class="t" style="left:102.0px;top:670.500px;font-size:8.500px;color:#6a6a6a;width:20px;text-align:center">yz</div>
<div class="t" style="left:134.5px;top:670.500px;font-size:8.500px;color:#6a6a6a;width:20px;text-align:center">zx</div>
<div class="t" style="letter-spacing:-0.093px;left:93.5px;top:689.6px;font-size:11px;color:#3d86b8;">Reference Elements</div>
<div class="t" style="letter-spacing:-0.067px;left:117.0px;top:713.3px;font-size:11px;color:#3a3a3a;">Subdivision Surface.1</div>
<div class="t" style="letter-spacing:-0.043px;left:117.0px;top:737.1px;font-size:11px;color:#3a3a3a;">Subdivision Surface.2</div>
<div class="t" style="letter-spacing:-0.114px;left:117.0px;top:761.1px;font-size:11px;color:#3a3a3a;">Knit Surface.1</div>
<div class="t" style="letter-spacing:-0.078px;left:117.0px;top:784.8px;font-size:11px;color:#3a3a3a;">Knit Surface.2</div>
<div class="t" style="letter-spacing:-0.134px;left:117.0px;top:808.5px;font-size:11px;color:#3a3a3a;">Combine.1</div>
<div class="t" style="letter-spacing:-0.113px;left:117.0px;top:831.4px;font-size:11px;color:#ababab;text-decoration:line-through">Fillet.1</div>
<div class="abs" style="left:313px;top:181px;width:260px;height:267px;background:#f0f0f0;box-shadow:0 2px 5px rgba(0,0,0,0.35)"></div>
<div class="abs" style="left:346px;top:181px;width:227px;height:21.500px;background:linear-gradient(#d8d8d8,#d1d1d1 70%,#c8c8c8)"></div>
<div class="abs" style="left:313px;top:226px;width:260px;height:1.500px;background:#c9c9c9"></div>
<div class="abs" style="left:321px;top:413px;width:244px;height:1px;background:#fafafa"></div>
<div class="t" style="letter-spacing:-0.029px;left:322.4px;top:209.3px;font-size:11px;color:#6c6c6c;font-weight:bold">Fillet</div>
<div class="abs" style="left:518.500px;top:204.500px;width:21px;height:20px;background:#e3e3e3;border:1px solid #9c9c9c;border-radius:2px"></div>
<div class="abs" style="left:371px;top:237px;width:35.500px;height:35.500px;border:1.500px solid #2b94c9;background:#f3f3f3"></div>
<div class="abs" style="left:325px;top:322.500px;width:236.500px;height:25px;border:2px solid #3f93b6;border-radius:3px;background:#fff;box-shadow:0 0 2px 1px rgba(120,210,235,0.45)"></div>
<div class="abs" style="left:330.500px;top:327px;width:70.500px;height:17px;border-radius:8.500px;background:#efefef"></div>
<div class="abs" style="left:443.500px;top:358px;width:118.500px;height:19.500px;border:1px solid #4d8fb0;border-radius:3px;background:#fff"></div>
<div class="abs" style="left:448.800px;top:362.200px;width:28.500px;height:11.600px;background:#3a78d4"></div>
<div class="abs" style="left:324.500px;top:391.500px;width:12.800px;height:12.800px;background:#3d8edb;border-radius:2px;border:1px solid #2f78c0"></div>
<svg class="abs" style="left:313px;top:181px" width="260" height="268" viewBox="313 181 260 268"><g stroke="#25475c" stroke-width="1.100" stroke-linejoin="round"><path d="M322.500 189.500l5.500-3 9 1.500v9l-7 3.500-7.500-3.500z" fill="#f4f8fa"/><path d="M328 188.500q3.500-3 9-.5v4q-5-1.500-9 1.500z" fill="#56a9d8"/><path d="M322.500 189.500l7 3.500v7.500" fill="none"/></g><path d="M354.500 212h9l-4.500 5.500z" fill="#9a9a9a"/><path d="M523 214.500l4 4 8.500-8" fill="none" stroke="#46a546" stroke-width="2.200"/><path d="M553.500 210.500l8.500 8.500M562 210.500l-8.500 8.500" stroke="#e0201f" stroke-width="2"/><g transform="translate(533 226) scale(1.18) translate(-533 -226)" stroke="#222" stroke-width="0.900" fill="#fff" stroke-linejoin="round"><path d="M531.500 226.500q1.800-1.200 2.500.5v7l1.200-.2q1-1.600 2.300-.2l.8.300q1.200-1.200 2.200.3l.2 2.200q.8 4-.7 7.500h-7.500q-2.500-3-4.500-6.500-.4-1.800 1.700-1.300l1.800 1.800z"/><path d="M535.200 234v3M537.800 234.500v2.800M540.200 235.200v2.300" fill="none"/></g><g stroke="#2a2a2a" stroke-width="1.200" stroke-linejoin="round"><path d="M381 250.500l6-4 9 2.500v8.500l-7.500 4.500-7.500-3.500z" fill="#f5f5f5"/><path d="M386.500 249q4-4 9.500-0v4q-5.500-2.500-9.500 1.500z" fill="#7cc0e6"/><path d="M381 250.500l7.500 3.500v8" fill="none"/></g><g stroke="#1d4a68" stroke-width="1.100"><path d="M491.500 250.500v11q0 2.500 6.500 2.500t6.500-2.500v-11z" fill="#4aa6d8"/><ellipse cx="498" cy="250.500" rx="6.500" ry="2.800" fill="#cfe8f5"/></g><rect x="324.500" y="296" width="20.500" height="20" fill="#52ad3f"/><path d="M329 299.500l11.500 5-4.600 1.600 3.800 5-2.200 1.600-3.700-5.100-3.200 3.400z" fill="#fff"/><path d="M468 301.500l8.500 8.500M476.500 301.500l-8.500 8.500" stroke="#222" stroke-width="1.500"/><path d="M491.500 309.500l5.700-6 5.700 6" fill="none" stroke="#111" stroke-width="1.900"/><path d="M386.500 332.500l6 6M392.500 332.500l-6 6" stroke="#c9c9c9" stroke-width="1.300"/><path d="M558 340l-5 5M558 343l-2.500 2.500" stroke="#8a8a8a" stroke-width="0.900"/><path d="M327 397.500l3 3 5-5.500" fill="none" stroke="#fff" stroke-width="1.900"/><path d="M326 425.500v8.500l6-4.200z" fill="#bdbdbd"/></svg>
<div class="t" style="letter-spacing:-0.129px;left:367.0px;top:276.8px;font-size:11px;color:#3a9ad0;">Constant</div>
<div class="t" style="letter-spacing:0.008px;left:473.0px;top:276.8px;font-size:11px;color:#c2c2c2;">Full round</div>
<div class="t" style="letter-spacing:-0.061px;left:349.0px;top:300.8px;font-size:11px;color:#2e2e2e;">Select edges/faces - 1</div>
<div class="t" style="letter-spacing:-0.179px;left:342.8px;top:330.6px;font-size:11px;color:#7a7a7a;">Edge.1</div>
<div class="t" style="letter-spacing:-0.125px;left:324.5px;top:362.6px;font-size:11px;color:#2e2e2e;">Radius</div>
<div class="t" style="letter-spacing:-0.125px;left:449.5px;top:362.8px;font-size:11px;color:#fff;">2 mm</div>
<div class="t" style="letter-spacing:-0.053px;left:346.4px;top:392.4px;font-size:11px;color:#2e2e2e;">Propagate along tangent edges</div>
<div class="t" style="letter-spacing:-0.110px;left:342.8px;top:424.6px;font-size:11px;color:#787878;font-weight:bold">Advanced</div><div class="abs" style="left:567.5px;top:907px;width:62.5px;height:20px;background:#f1f1f1;border-right:1px solid #c4c4c4;border-top:1px solid #e4e4e4"></div>
<div class="t" style="letter-spacing:-0.150px;left:574.8px;top:910.300px;font-size:12px;color:#444">Standard</div>
<div class="abs" style="left:630.0px;top:907px;width:52.0px;height:20px;background:#d3d3d3;border-right:1px solid #dedede;border-top:1px solid #cbcbcb"></div>
<div class="t" style="letter-spacing:-0.248px;left:638.2px;top:910.300px;font-size:12px;color:#444">Sketch</div>
<div class="abs" style="left:682.0px;top:907px;width:62.6px;height:20px;background:#f1f1f1;border-right:1px solid #c4c4c4;border-top:1px solid #e4e4e4"></div>
<div class="t" style="letter-spacing:-0.170px;left:689.9px;top:910.300px;font-size:12px;color:#444">Features</div>
<div class="abs" style="left:744.6px;top:907px;width:61.9px;height:20px;background:#d3d3d3;border-right:1px solid #dedede;border-top:1px solid #cbcbcb"></div>
<div class="t" style="letter-spacing:-0.145px;left:752.2px;top:910.300px;font-size:12px;color:#444">Surfaces</div>
<div class="abs" style="left:806.5px;top:907px;width:66.2px;height:20px;background:#d3d3d3;border-right:1px solid #dedede;border-top:1px solid #cbcbcb"></div>
<div class="t" style="letter-spacing:-0.252px;left:814.5px;top:910.300px;font-size:12px;color:#444">Assembly</div>
<div class="abs" style="left:872.7px;top:907px;width:107.6px;height:20px;background:#d3d3d3;border-right:1px solid #dedede;border-top:1px solid #cbcbcb"></div>
<div class="t" style="letter-spacing:-0.091px;left:881.0px;top:910.300px;font-size:12px;color:#444">Design Guidance</div>
<div class="abs" style="left:980.3px;top:907px;width:42.4px;height:20px;background:#d3d3d3;border-right:1px solid #dedede;border-top:1px solid #cbcbcb"></div>
<div class="t" style="letter-spacing:-0.203px;left:988.0px;top:910.300px;font-size:12px;color:#444">Tools</div>
<div class="abs" style="left:1022.7px;top:907px;width:58.2px;height:20px;background:#d3d3d3;border-right:1px solid #dedede;border-top:1px solid #cbcbcb"></div>
<div class="t" style="letter-spacing:-0.229px;left:1031.0px;top:910.300px;font-size:12px;color:#444">Manage</div>
<div class="abs" style="left:1080.9px;top:907px;width:79.7px;height:20px;background:#d3d3d3;border-right:1px solid #dedede;border-top:1px solid #cbcbcb"></div>
<div class="t" style="letter-spacing:-0.161px;left:1089.4px;top:910.300px;font-size:12px;color:#444">Marketplace</div>
<div class="abs" style="left:1160.6px;top:907px;width:41.2px;height:20px;background:#d3d3d3;border-right:1px solid #dedede;border-top:1px solid #cbcbcb"></div>
<div class="t" style="letter-spacing:-0.224px;left:1169.3px;top:910.300px;font-size:12px;color:#444">View</div>
<svg class="abs" style="left:564px;top:905px" width="10" height="10" viewBox="0 0 10 10"><path d="M2 2h6.500l-4.500 6z" fill="#3d86b8"/></svg>
<div class="abs" style="left:302px;top:926.500px;width:1148px;height:48px;background:#f0f0f0;border-top:1px solid #d6d6d6;border-left:1px solid #d0d0d0;border-right:2px solid #c6c6c6;border-radius:4px 0 0 0"></div>
<div class="abs" style="left:318.2px;top:928px;width:1px;height:46px;background:#dcdcdc"></div>
<div class="abs" style="left:359.5px;top:928px;width:1px;height:46px;background:#dcdcdc"></div>
<div class="abs" style="left:410.5px;top:928px;width:1px;height:46px;background:#dcdcdc"></div>
<div class="abs" style="left:462.6px;top:928px;width:1px;height:46px;background:#dcdcdc"></div>
<div class="abs" style="left:512.6px;top:928px;width:1px;height:46px;background:#dcdcdc"></div>
<div class="abs" style="left:621px;top:927px;width:1.300px;height:47px;background:#8f8f8f"></div>
<div class="abs" style="left:877.500px;top:932px;width:32px;height:32px;border:1px solid #9fb9c9;background:#f4f6f7"></div>
<svg class="abs" style="left:300px;top:926px" width="1152" height="50" viewBox="300 926 1152 50"><defs><linearGradient id="bl" x1="0" y1="0" x2="1" y2="1"><stop offset="0" stop-color="#6fbbe4"/><stop offset="1" stop-color="#2f82b5"/></linearGradient><linearGradient id="wh" x1="0" y1="0" x2="1" y2="1"><stop offset="0" stop-color="#ffffff"/><stop offset="1" stop-color="#d8d8d8"/></linearGradient></defs><path d="M306.500 936.500l3.500 3 3.500-3" fill="none" stroke="#444" stroke-width="1.400"/><g transform="translate(343.0 951.0) scale(0.88)" stroke="#2b2b2b" stroke-width="1.100" stroke-linejoin="round"><path d="M-11-6l7-3 5 2v5l6-2.500 6 2.500v9l-11 5-13-6z" fill="url(#wh)"/><path d="M-11-6l6 2.500v5.500l7 3 6-3M-5 2l6-2.500M2 5v9M-5-3.500l6-3.500" fill="none"/></g><path d="M331 932.500v9M326.500 937h9M327.800 933.800l6.400 6.400M334.200 933.800l-6.400 6.400" stroke="#2f82b5" stroke-width="1.500"/><g transform="translate(378.0 950.0) scale(0.88)" stroke="#2b2b2b" stroke-width="1.100" stroke-linejoin="round"><path d="M-11-6l7-3 5 2v5l6-2.500 6 2.500v9l-11 5-13-6z" fill="url(#wh)"/><path d="M-11-6l6 2.500v5.500l7 3 6-3M-5 2l6-2.500M2 5v9M-5-3.500l6-3.500" fill="none"/></g><path d="M382 934q8 1 7 11l3.500-1-5 6-4-6.500 3 .8q.5-6.500-5-7.500z" fill="url(#bl)" stroke="#174a6b" stroke-width="1.100" stroke-linejoin="round"/><path d="M399.3 950.5l2.500-4.500 2.500 4.500z" fill="#111"/><g stroke="#2b2b2b" stroke-width="1.100" stroke-linejoin="round"><path d="M421 938v18q0 3 9.500 3t9.500-3v-18z" fill="url(#wh)"/><ellipse cx="430.500" cy="938" rx="9.500" ry="3.300" fill="#f4f4f4"/><path d="M421 944q0 3 9.500 3t9.500-3M421 950q0 3 9.500 3t9.500-3" fill="none"/></g><path d="M437.500 964v-8h-4l7-8 7 8h-4v8z" fill="url(#bl)" stroke="#174a6b" stroke-width="1.100" stroke-linejoin="round"/><path d="M450.4 950.5l2.500-4.500 2.500 4.500z" fill="#111"/><g fill="url(#bl)" stroke="#174a6b" stroke-width="1.100" stroke-linejoin="round"><path d="M470 946a12.500 12.500 0 0 1 8-9l-1-3.500 8 3.500-5 6-.8-3a9 9 0 0 0-5.500 6.500z"/><path d="M485 936.500a12.500 12.500 0 0 1 9 8l3.500-1-3.500 8-6-5 3-.8a9 9 0 0 0-6.500-5.500z"/><path d="M494.500 951.500a12.500 12.500 0 0 1-8 9l1 3.500-8-3.500 5-6 .8 3a9 9 0 0 0 5.500-6.500z"/><path d="M479.500 961a12.500 12.500 0 0 1-9-8l-3.500 1 3.500-8 6 5-3 .8a9 9 0 0 0 6.500 5.500z"/></g><path d="M476.500 948.500l4 4 8-8" fill="none" stroke="#111" stroke-width="2.600"/><path d="M501.4 950.5l2.500-4.500 2.500 4.500z" fill="#111"/><path d="M524 938l1.500 11 10-2.500-3.800-2.300q6-3.500 9 1.500 3 6-4.500 13.500 12-5 10-15-3-9.500-15-5.500l-3-3.500z" fill="url(#bl)" stroke="#174a6b" stroke-width="1.100" stroke-linejoin="round"/><g opacity="0.45"><path d="M583 938l-1.500 11-10-2.500 3.800-2.300q-6-3.500-9 1.500-3 6 4.500 13.500-12-5-10-15 3-9.500 15-5.500l3-3.500z" fill="url(#bl)" stroke="#174a6b" stroke-width="1.100" stroke-linejoin="round"/></g><path d="M635.500 940l16-4.500v22l-16 5z" fill="url(#bl)" stroke="#174a6b" stroke-width="1.100" stroke-linejoin="round"/><path d="M643.500 933v32" stroke="#111" stroke-width="1.200" stroke-dasharray="3 2"/><path d="M661.7 950.5l2.500-4.500 2.500 4.500z" fill="#111"/><g stroke="#2b2b2b" stroke-width="1.100" stroke-linejoin="round"><path d="M692 936l6-2.500 7.500 4v20l-6 3-7.500-4z" fill="url(#wh)"/><path d="M692 936l7.500 4v20.500M699.500 940l6-2.500" fill="none"/></g><g stroke="#174a6b" stroke-width="1.100" stroke-linejoin="round"><path d="M680.500 945l5-2.500 10 3v10.500l-5 3-10-3.500z" fill="url(#bl)"/><path d="M680.500 945l10 3.500v10.500M690.500 948.500l5-3" fill="none"/></g><path d="M711.7 950.5l2.500-4.500 2.500 4.500z" fill="#111"/><path d="M737 939q3-6 11-4.500 9 2.500 8.500 13.500-1 11-11 12.500-8 .5-11.500-5.500l4.500-3.500q3 3.500 7 2.500 4.500-1.500 4.500-7 0-5-4-6-3.500-.5-5.500 2.500z" fill="url(#bl)" stroke="#174a6b" stroke-width="1.100" stroke-linejoin="round"/><path d="M737.500 946.500l8 4" stroke="#111" stroke-width="1"/><path d="M761.6 950.5l2.500-4.500 2.500 4.500z" fill="#111"/><path d="M782 956q-1-4 3-5 4.500-.5 5-7 .5-8.500 8-9 3.500-.2 5 2 3 .5 3 3.500t-3.500 4q-3 .5-5-1.500-1.500.5-1.500 4-.5 9.500-7.500 11.500-5.500 1-6.500-2.500z" fill="url(#bl)" stroke="#174a6b" stroke-width="1.100" stroke-linejoin="round"/><path d="M812.0 950.5l2.500-4.500 2.500 4.500z" fill="#111"/><path d="M838.500 936q5-2.500 10 0l1 14 6 8.500q-12 6-24 0l6-8.500z" fill="url(#bl)" stroke="#174a6b" stroke-width="1.100" stroke-linejoin="round"/><ellipse cx="843.500" cy="936.300" rx="5" ry="1.800" fill="#bfe0f2" stroke="#174a6b" stroke-width="1.100" stroke-linejoin="round"/><path d="M862.0 950.5l2.500-4.500 2.500 4.500z" fill="#111"/><g stroke="#2b2b2b" stroke-width="1.100" stroke-linejoin="round"><path d="M883 940l6-4 14 3v17l-10 5-10-5z" fill="url(#wh)"/><path d="M887 941q6-6 16-2v7.500q-9-3.500-16 3z" fill="url(#bl)" stroke="#174a6b"/><path d="M883 940l4 2v14.500l6 4.500" fill="none"/></g><path d="M911.9 950.5l2.500-4.500 2.500 4.500z" fill="#111"/><g stroke="#2b2b2b" stroke-width="1.100" stroke-linejoin="round"><path d="M932.500 939l5-3.500 17 1.500v18l-6 5.500-16-3z" fill="url(#wh)"/><path d="M932.500 939l16 2.500v19M948.500 941.500l6-4.500" fill="none"/></g><ellipse cx="941" cy="950.500" rx="5" ry="5.500" fill="url(#bl)" stroke="#174a6b" stroke-width="1.100" stroke-linejoin="round"/><path d="M937.500 954l7-7" stroke="#174a6b" stroke-width="1"/><g stroke="#174a6b" stroke-width="1.100" stroke-linejoin="round"><path d="M971.500 942l8.500-6.500 12 1 6.500 11.500v11l-8 3.500-19-5z" fill="url(#bl)"/><path d="M990.500 952h7.500v8l-7.500 3z" fill="#fff" stroke="#2b2b2b"/><path d="M971.500 942l19 10" fill="none"/></g><g stroke="#2b2b2b" stroke-width="1.100" stroke-linejoin="round"><path d="M1012 938l7-3 16 3.500v17.500l-8 6-15-6z" fill="url(#wh)"/><path d="M1017 940l14 3v13l-6 4.500-8-3.500z" fill="url(#bl)" stroke="#174a6b"/><path d="M1012 938l5 2M1031 956l4 0" fill="none"/></g><g stroke="#174a6b" stroke-width="1.100" stroke-linejoin="round"><path d="M1052.500 944l6-5q5 3 9-1.500l7 2v13l-6 5.500q-5-3.500-9 1l-7-2.500z" fill="url(#bl)"/></g><path d="M1079.500 937v15M1075.500 948l4 5 4-5" fill="none" stroke="#111" stroke-width="1.700"/><path d="M1056 961l-4-3" stroke="#2b2b2b"/><g stroke="#174a6b" stroke-width="1.100" stroke-linejoin="round"><path d="M1090.500 959l8.500-24 4 2.500-5.500 25z" fill="url(#bl)"/><path d="M1103 937.500l4 22-9.500 3" fill="#dfeef7"/></g><path d="M1108.500 941l8 17.500-9 3.500" fill="#f4f4f4" stroke="#2b2b2b" stroke-width="1.100" stroke-linejoin="round"/><rect x="1133.5" y="935.5" width="6" height="10.500" rx="1" fill="#f8f8f8" stroke="#333" stroke-width="1"/><rect x="1133.5" y="949.5" width="6" height="10.500" rx="1" fill="url(#bl)" stroke="#333" stroke-width="1"/><rect x="1142.5" y="935.5" width="6" height="10.500" rx="1" fill="#f8f8f8" stroke="#333" stroke-width="1"/><rect x="1142.5" y="949.5" width="6" height="10.500" rx="1" fill="#f8f8f8" stroke="#333" stroke-width="1"/><rect x="1151.5" y="935.5" width="6" height="10.500" rx="1" fill="#f8f8f8" stroke="#333" stroke-width="1"/><rect x="1151.5" y="949.5" width="6" height="10.500" rx="1" fill="#f8f8f8" stroke="#333" stroke-width="1"/><path d="M1162.9 950.5l2.500-4.500 2.500 4.500z" fill="#111"/><g stroke="#174a6b" stroke-width="1.100" stroke-linejoin="round"><path d="M1189.0 938.0l6.0-3 6.0 3v10.2l-6.0 3.500-6.0-3.500z" fill="url(#bl)"/><path d="M1189.0 938.0l6.0 3 6.0-3M1195.0 941.0v10.2" fill="none"/></g><g stroke="#174a6b" stroke-width="1.100" stroke-linejoin="round"><path d="M1183.0 946.0l6.0-3 6.0 3v10.2l-6.0 3.500-6.0-3.500z" fill="url(#bl)"/><path d="M1183.0 946.0l6.0 3 6.0-3M1189.0 949.0v10.2" fill="none"/></g><g stroke="#174a6b" stroke-width="1.100" stroke-linejoin="round"><path d="M1195.0 944.0l5.0-3 5.0 3v8.5l-5.0 3.500-5.0-3.500z" fill="url(#bl)"/><path d="M1195.0 944.0l5.0 3 5.0-3M1200.0 947.0v8.5" fill="none"/></g><path d="M1213.0 950.5l2.500-4.500 2.500 4.500z" fill="#111"/><rect x="1231.500" y="935.500" width="20" height="20" fill="#dfe9ef" stroke="#174a6b" stroke-width="1.100" stroke-linejoin="round"/><rect x="1234.500" y="938.500" width="20" height="20" fill="url(#bl)" stroke="#174a6b" stroke-width="1.100" stroke-linejoin="round"/><path d="M1246 964v-17M1246 958l11 2.500M1246 958l-7 5.500M1243 950.500l3-4.500 3 4.500M1254 957.500l4 3-4.500 2M1241 959.500l-3 4.500 5-.5" fill="none" stroke="#111" stroke-width="1.500"/><path d="M1263.4 950.5l2.500-4.500 2.500 4.500z" fill="#111"/><g stroke="#2b2b2b" stroke-width="1.100" stroke-linejoin="round"><path d="M1284 940l6-4 16 2v18l-7 5-15-4z" fill="url(#wh)"/><path d="M1284 940l15 3v18M1299 943l7-5" fill="none"/></g><path d="M1288 947l6 6M1294 947l-6 6" stroke="#d3202a" stroke-width="2"/><path d="M1313.2 950.5l2.500-4.500 2.500 4.500z" fill="#111"/><g stroke="#174a6b" stroke-width="1.100" stroke-linejoin="round"><path d="M1341.0 936.0l7.5-3 7.5 3v12.8l-7.5 3.500-7.5-3.500z" fill="url(#bl)"/><path d="M1341.0 936.0l7.5 3 7.5-3M1348.5 939.0v12.8" fill="none"/></g><g stroke="#2b2b2b" stroke-width="1.100" stroke-linejoin="round"><path d="M1330.500 953l4.500-2 4.500 2v6.500l-4.500 2.500-4.500-2.500z" fill="#fbfbfb"/></g><path d="M1338 958l12-9M1346 948.500l4.500-.5-.5 4.500" fill="none" stroke="#111" stroke-width="1.600"/><ellipse cx="1385" cy="957.500" rx="13" ry="5.500" fill="#fdfdfd" stroke="#2b2b2b" stroke-width="1.100" stroke-linejoin="round"/><path d="M1372.500 951q1-11 12-13 9-1 12.500 6 2 7-4 11-8 3.500-15.500 1-4-2-5-5z" fill="url(#bl)" stroke="#174a6b" stroke-width="1.100" stroke-linejoin="round"/><path d="M1386 947l11-11M1391.500 935.500l6-.5-.5 6" fill="none" stroke="#111" stroke-width="1.800"/><g transform="translate(1424.0 950.0) scale(1.05)" stroke="#2b2b2b" stroke-width="1.100" stroke-linejoin="round"><path d="M-11-6l7-3 5 2v5l6-2.500 6 2.500v9l-11 5-13-6z" fill="url(#wh)"/><path d="M-11-6l6 2.500v5.500l7 3 6-3M-5 2l6-2.500M2 5v9M-5-3.500l6-3.500" fill="none"/></g></svg>
<div class="abs" style="left:1696.500px;top:863px;width:46.500px;height:46px;border-radius:23.500px;background:#fff;box-shadow:0 1px 3px rgba(0,0,0,0.18)"></div>
<svg class="abs" style="left:1690px;top:855px" width="60" height="60" viewBox="1690 855 60 60"><path d="M1716 876.500h14v9.500h-2v2.500l-2.500-2.500h-9.500z" fill="#1b4f80"/><path d="M1710 884.500h13.500v8.500h-9v2.500l-2.500-2.500h-2z" fill="#1b4f80" stroke="#fff" stroke-width="1"/><circle cx="1735.800" cy="871" r="6.800" fill="#57b947"/><path d="M1732.300 871l2.600 2.600 4.400-4.800" fill="none" stroke="#fff" stroke-width="1.700"/></svg>
<div class="abs" id="vpshadow" style="left:11px;top:179.500px;width:1728.500px;height:3.500px;background:linear-gradient(rgba(150,150,150,0.45),rgba(150,150,150,0.15) 50%,rgba(150,150,150,0))"></div><div class="abs" style="left:0;top:140px;width:1.500px;height:845px;background:#d9d9d9"></div><div class="abs" style="left:0;top:984px;width:1750px;height:1px;background:#e2e2e2"></div><div class="abs" style="left:1744px;top:141px;width:1px;height:843px;background:#efefef"></div>
</div></body></html>
